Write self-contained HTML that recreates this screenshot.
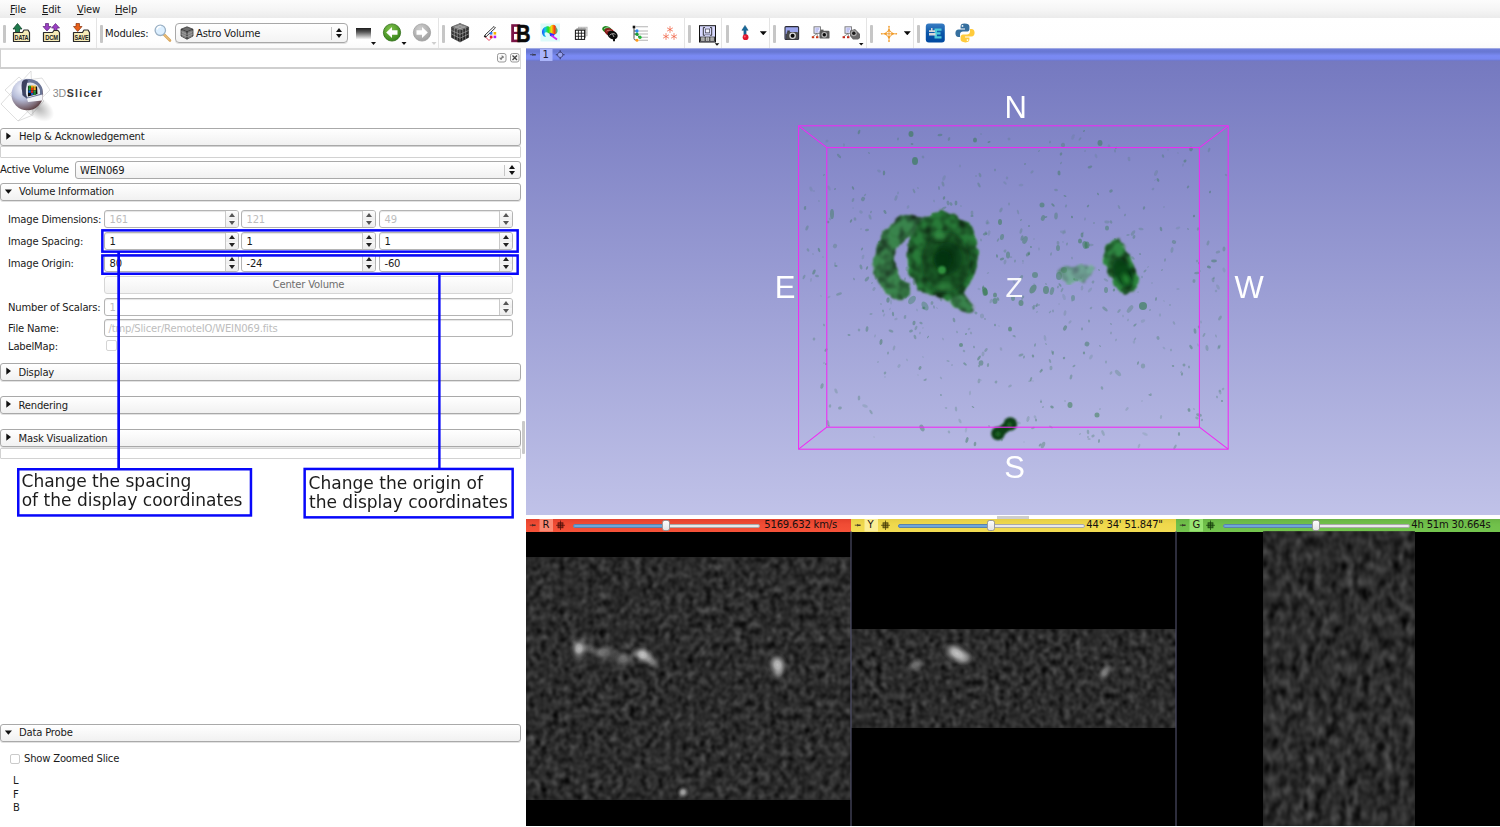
<!DOCTYPE html>
<html lang="en">
<head>
<meta charset="utf-8">
<title>3D Slicer - Astro Volume</title>
<style>
*{box-sizing:border-box;margin:0;padding:0}
html,body{width:1500px;height:827px;overflow:hidden;background:#fff}
body{font-family:"DejaVu Sans","Liberation Sans",sans-serif;font-size:10px;letter-spacing:-0.18px;color:#1a1a1a;position:relative}
.abs{position:absolute}
#menubar{left:0;top:0;width:1500px;height:18px;background:linear-gradient(#fcfcfc,#f5f5f5 55%,#ebebeb)}
#menubar span{position:absolute;top:3px;line-height:14px}
#menubar u{text-decoration:underline}
#toolbar{left:0;top:18px;width:1500px;height:30px;background:linear-gradient(#fff,#fefefe 80%,#fafafa)}
.sep{position:absolute;top:7px;width:3px;height:18px;background:#c6c6c6;border-radius:1px}
.tbdiv{position:absolute;top:0;width:1px;height:30px;background:#e4e4e4}
#left{left:0;top:0;width:526px;height:827px}
.combo{border:1px solid #a9a9a9;border-radius:3px;background:linear-gradient(#fff,#f1f1f1)}
.combo b{position:absolute;right:15px;top:3px;width:1px;height:11px;background:#c6c6c6}
.combo i:before{content:"";position:absolute;right:5px;top:3px;border-bottom:4px solid #111;border-left:3.5px solid transparent;border-right:3.5px solid transparent}
.combo i:after{content:"";position:absolute;right:5px;top:9px;border-top:4px solid #111;border-left:3.5px solid transparent;border-right:3.5px solid transparent}
.collapse{position:absolute;left:0;width:521px;height:18px;border:1px solid #a9a9a9;border-radius:3px;background:linear-gradient(#ffffff,#f1f1f1);box-shadow:0 1px 0 #e2e2e2}
.collapse span{position:absolute;left:18px;top:1px;line-height:14px}
.tri-r{position:absolute;left:5.3px;top:3.4px;width:4.7px;height:7.4px;background:#111;clip-path:polygon(0 0,100% 50%,0 100%)}
.tri-d{position:absolute;left:3.8px;top:5.4px;width:7.2px;height:4.4px;background:#111;clip-path:polygon(0 0,100% 0,50% 100%)}
.frame{position:absolute;left:0;width:521px;height:10px;border:1px solid #d2d2d2;border-radius:1px;background:#fff}
.lbl{position:absolute;line-height:14px;white-space:nowrap}
.spin{position:absolute;height:18px;border:1px solid #b4b4b4;border-radius:3px;background:#fff;box-shadow:inset 0 1px 1px #e4e4e4}
.spin span{position:absolute;left:4.5px;top:2px;line-height:14px}
.spin.dis span{color:#bdbdbd}
.spin i{position:absolute;right:0;top:0;width:13px;height:16px;border-left:1px solid #c9c9c9;background:linear-gradient(#fdfdfd,#efefef 48%,#cfcfcf 50%,#f8f8f8 54%,#ececec);border-radius:0 2px 2px 0}
.spin i:before{content:"";position:absolute;left:3px;top:2px;border-bottom:4px solid #222;border-left:3px solid transparent;border-right:3px solid transparent}
.spin i:after{content:"";position:absolute;left:3px;top:10px;border-top:4px solid #222;border-left:3px solid transparent;border-right:3px solid transparent}
.spin.dis i:before{border-bottom-color:#555}
.spin.dis i:after{border-top-color:#555}
.anno{position:absolute;border:3px solid #0505fc}
.annot{position:absolute;border:3px solid #0505fc;background:#fff;font-size:17.5px;line-height:20px;color:#111;padding:1px 0 0 3px;white-space:nowrap}
.vline{position:absolute;width:3px;background:#0505fc}
#right{left:0;top:0;width:1500px;height:827px}
</style>
</head>
<body>
<div id="menubar" class="abs">
<span style="left:10px"><u>F</u>ile</span><span style="left:42px"><u>E</u>dit</span><span style="left:77px"><u>V</u>iew</span><span style="left:115px"><u>H</u>elp</span>
</div>
<div id="toolbar" class="abs">
<div class="sep" style="left:3px"></div>
<svg class="abs" style="left:12px;top:4px" width="20" height="22" viewBox="0 0 20 22"><path d="M1 7 L5.5 1.5 L10 7 H7.5 V10.5 H3.5 V7 Z" fill="#1f7a4c" stroke="#14482d" stroke-width=".8"/><path d="M1.5 10.5 H10.5 L12 8 H16 L17.5 10.5 V19.5 H1.5 Z" fill="#f6ecb8" stroke="#2b2b2b" stroke-width="1.2" stroke-linejoin="round"/><text x="2.6" y="17.6" font-size="6.6" font-weight="bold" font-family="Liberation Sans,sans-serif" textLength="13.8" lengthAdjust="spacingAndGlyphs" fill="#222">DATA</text></svg>
<svg class="abs" style="left:42px;top:4px" width="20" height="22" viewBox="0 0 20 22"><path d="M1 4.5 H3.5 V1.5 H6.5 V4.5 H9 L5 9 Z" fill="#9b3fc4" stroke="#5a2476" stroke-width=".7"/><path d="M9.5 6 L13.5 1.5 L17.5 6 H15 V9 H12 V6 Z" fill="#9b3fc4" stroke="#5a2476" stroke-width=".7"/><path d="M1.5 10.5 H10.5 L12 8.5 H16 L17.5 10.5 V19.5 H1.5 Z" fill="#f6ecb8" stroke="#2b2b2b" stroke-width="1.2" stroke-linejoin="round"/><text x="3.2" y="17.6" font-size="6.6" font-weight="bold" font-family="Liberation Sans,sans-serif" textLength="12.6" lengthAdjust="spacingAndGlyphs" fill="#222">DCM</text></svg>
<svg class="abs" style="left:72px;top:4px" width="20" height="22" viewBox="0 0 20 22"><path d="M1.5 4.5 H4 V1.5 H7.5 V4.5 H10 L5.7 9.5 Z" fill="#e8601a" stroke="#8a300a" stroke-width=".7"/><path d="M1.5 10.5 H10.5 L12 8 H16 L17.5 10.5 V19.5 H1.5 Z" fill="#f6ecb8" stroke="#2b2b2b" stroke-width="1.2" stroke-linejoin="round"/><text x="2.6" y="17.6" font-size="6.6" font-weight="bold" font-family="Liberation Sans,sans-serif" textLength="13.8" lengthAdjust="spacingAndGlyphs" fill="#222">SAVE</text></svg>
<div class="tbdiv" style="left:96px"></div>
<div class="sep" style="left:100px"></div>
<span class="lbl" style="left:105px;top:9px">Modules:</span>
<svg class="abs" style="left:153px;top:5px" width="20" height="20" viewBox="0 0 20 20"><line x1="10" y1="10.5" x2="17" y2="17.5" stroke="#d9a55a" stroke-width="2.6" stroke-linecap="round"/><line x1="10.5" y1="11" x2="16.5" y2="17" stroke="#f1cf92" stroke-width="1" stroke-linecap="round"/><circle cx="7.3" cy="7.3" r="5.2" fill="#dcefff" stroke="#9ab0c4" stroke-width="1.3"/><path d="M4 6.5 A3.6 3.6 0 0 1 8 3.6" stroke="#fff" stroke-width="1.4" fill="none"/></svg>
<div class="abs" id="modcombo" style="left:175px;top:5px;width:173px;height:20px;border:1px solid #a8a8a8;border-radius:4px;background:linear-gradient(#fff,#f3f3f3);box-shadow:0 1px 0 #e0e0e0">
<svg class="abs" style="left:4px;top:2px" width="14" height="14" viewBox="0 0 14 14"><path d="M7 .8 L13 3.2 V10 L7 13.2 L1 10 V3.2 Z" fill="#6c6c6c" stroke="#3a3a3a" stroke-width=".8"/><path d="M1 3.2 L7 5.8 L13 3.2 M7 5.8 V13.2" stroke="#2e2e2e" stroke-width=".8" fill="none"/><path d="M3 4.4 V11 M5 5.2 V12 M9 5.2 V12 M11 4.4 V11 M1 5.6 L7 8.4 L13 5.6 M1 7.9 L7 10.8 L13 7.9" stroke="#b9b9b9" stroke-width=".5" fill="none"/></svg>
<span class="lbl" style="left:20px;top:3px">Astro Volume</span>
<div class="abs" style="left:155px;top:3px;width:1px;height:13px;background:#c6c6c6"></div>
<div class="abs" style="left:160px;top:4px;border-bottom:4px solid #111;border-left:3.5px solid transparent;border-right:3.5px solid transparent"></div>
<div class="abs" style="left:160px;top:10px;border-top:4px solid #111;border-left:3.5px solid transparent;border-right:3.5px solid transparent"></div>
</div>
<svg class="abs" style="left:354px;top:8px" width="24" height="20" viewBox="0 0 24 20"><defs><linearGradient id="gg1" x1="0" y1="0" x2="0" y2="1"><stop offset="0" stop-color="#1c1c1c"/><stop offset=".35" stop-color="#555"/><stop offset="1" stop-color="#f4f4f4"/></linearGradient></defs><rect x="2" y="2" width="15" height="11" fill="url(#gg1)"/><path d="M17 16 H22 L19.5 19 Z" fill="#111"/></svg>
<svg class="abs" style="left:382px;top:4px" width="28" height="24" viewBox="0 0 28 24"><defs><radialGradient id="gg2" cx=".4" cy=".3" r=".8"><stop offset="0" stop-color="#7fc24a"/><stop offset="1" stop-color="#2f7d14"/></radialGradient></defs><circle cx="10" cy="10.5" r="8.6" fill="url(#gg2)" stroke="#2c6a14" stroke-width=".8"/><path d="M4.2 10.5 L10 5 V8.3 H15.5 V12.7 H10 V16 Z" fill="#fff"/><path d="M19.5 20 H24.5 L22 23 Z" fill="#111"/></svg>
<svg class="abs" style="left:412px;top:4px" width="28" height="24" viewBox="0 0 28 24"><defs><radialGradient id="gg3" cx=".4" cy=".3" r=".8"><stop offset="0" stop-color="#cfcfcf"/><stop offset="1" stop-color="#9a9a9a"/></radialGradient></defs><circle cx="10" cy="10.5" r="8.6" fill="url(#gg3)" stroke="#9d9d9d" stroke-width=".8"/><path d="M15.8 10.5 L10 5 V8.3 H4.5 V12.7 H10 V16 Z" fill="#fff"/><path d="M19.5 20 H24.5 L22 23 Z" fill="#cfcfcf"/></svg>
<div class="tbdiv" style="left:438px"></div>
<div class="sep" style="left:442px"></div>
<svg class="abs" style="left:450px;top:4px" width="20" height="22" viewBox="0 0 20 22"><defs><linearGradient id="cbf" x1="0" y1="0" x2="0" y2="1"><stop offset="0" stop-color="#555"/><stop offset="1" stop-color="#1c1c1c"/></linearGradient></defs><path d="M10 1.600 L18.600 5 V15.400 L10 20 L1.500 15.400 V5 Z" fill="url(#cbf)" stroke="#333" stroke-width=".6"/><path d="M1.500 5 L10 8.600 L18.600 5 L10 1.600 Z" fill="#777"/><path d="M10 8.600 V20 L18.600 15.400 V5 Z" fill="#000" opacity=".25"/><path d="M4.300 6.200 V17 M7.200 7.400 V18.500 M12.800 7.400 V18.500 M15.700 6.200 V17 M1.500 8.500 L10 12.300 L18.600 8.500 M1.500 12 L10 16.200 L18.600 12 M4.300 3.900 L12.800 7.400 M7.200 2.700 L15.700 6.200 M15.700 3.900 L7.200 7.400 M12.800 2.700 L4.300 6.200 M10 8.600 V20" stroke="#cfcfcf" stroke-width=".6" fill="none" opacity=".8"/></svg>
<svg class="abs" style="left:482px;top:6px" width="18" height="18" viewBox="0 0 18 18"><path d="M2.5 12 L7 16.5 L10 13.5" stroke="#e02848" stroke-width=".9" fill="none"/><path d="M2.8 11.2 L12 2.5 L13.4 3.9 L4.2 12.6 Z" fill="#fff" stroke="#222" stroke-width=".9"/><path d="M2.3 11.8 L3.7 13.2" stroke="#111" stroke-width="1.6"/><rect x="7.8" y="8" width="2.6" height="2.6" fill="#2f7bf0"/><rect x="11.6" y="8" width="2.6" height="2.6" fill="#f5b400"/><rect x="7.8" y="11.6" width="2.6" height="2.6" fill="#e62020"/><rect x="11.6" y="11.6" width="2.6" height="2.6" fill="#b41cf0"/></svg>
<svg class="abs" style="left:509px;top:4px" width="24" height="22" viewBox="0 0 24 22"><rect x="2.2" y="2.2" width="9" height="18" fill="#7a1446"/><rect x="5" y="4.8" width="4.2" height="5" fill="#fff"/><rect x="5" y="12" width="4.2" height="5.6" fill="#fff"/><text x="7.2" y="20.2" font-size="24" font-family="Liberation Sans,sans-serif" font-weight="bold" fill="#0a0a0a" stroke="#0a0a0a" stroke-width=".7" textLength="14" lengthAdjust="spacingAndGlyphs">B</text></svg>
<svg class="abs" style="left:540px;top:5px" width="21" height="20" viewBox="0 0 21 20"><defs><linearGradient id="rb" x1="0" y1="0" x2="1" y2="0"><stop offset="0" stop-color="#1848ff"/><stop offset=".2" stop-color="#10c8e8"/><stop offset=".4" stop-color="#20e020"/><stop offset=".6" stop-color="#f0e010"/><stop offset=".8" stop-color="#ff4010"/><stop offset="1" stop-color="#20d0a0"/></linearGradient><filter id="b05"><feGaussianBlur stdDeviation=".5"/></filter></defs><rect x=".5" y=".5" width="19.5" height="18" fill="#dcfafa"/><g filter="url(#b05)"><path d="M2 9 C2 4 8 2 10 4 C11 1 16 1 16.5 5 C19 7 17 12 14 11.5 L11 12 C8 9 5 8 4.5 11 L6 14 L4 13.5 C2.5 12 2 10.5 2 9 Z" fill="url(#rb)"/><path d="M9.5 9.5 L15 11.5 L13 13.5 L10 13 Z" fill="#3030ff"/><path d="M11.5 12.5 L17 16.5" stroke="#d020f0" stroke-width="1.8"/></g></svg>
<svg class="abs" style="left:573px;top:7px" width="16" height="16" viewBox="0 0 16 16"><rect x="5.5" y="2.2" width="8.6" height="8.6" fill="#d8d8d8" stroke="#b4b4b4" stroke-width=".8"/><path d="M8.4 2.2 V10.8 M11.2 2.2 V10.8 M5.5 5 H14 M5.5 7.9 H14" stroke="#b4b4b4" stroke-width=".7"/><rect x="3.8" y="3.8" width="8.6" height="8.6" fill="#bcbcbc" stroke="#8a8a8a" stroke-width=".8"/><rect x="2.4" y="5.2" width="9.2" height="9.2" fill="#fff" stroke="#111" stroke-width="1"/><path d="M5.4 5.2 V14.4 M8.4 5.2 V14.4 M2.4 8.2 H11.6 M2.4 11.3 H11.6" stroke="#111" stroke-width=".85"/></svg>
<svg class="abs" style="left:600px;top:6px" width="20" height="18" viewBox="0 0 20 18"><ellipse cx="7" cy="5.6" rx="5" ry="3.3" fill="#1f8a1f" transform="rotate(20 7 5.6)"/><path d="M4 5 C5.5 3.4 8 3.4 9.5 4.6" stroke="#fff" stroke-width=".6" fill="none"/><ellipse cx="9.5" cy="8" rx="5.3" ry="3.5" fill="#8a1a1a" transform="rotate(25 9.500 8)"/><path d="M6.500 7.200 C8 5.800 10.500 6 12 7.200" stroke="#e8b0b0" stroke-width=".6" fill="none"/><ellipse cx="12.600" cy="11" rx="5.300" ry="4" fill="#0c0c0c" transform="rotate(25 12.600 11)"/><path d="M14 14 V17.200" stroke="#0c0c0c" stroke-width="2"/><path d="M9.500 11.500 C11 9.300 14 9 15.500 10.500 M12.500 10 L14 13" stroke="#fff" stroke-width=".6" fill="none"/></svg>
<svg class="abs" style="left:630px;top:6px" width="20" height="18" viewBox="0 0 20 18"><path d="M4 3 V14.500 Q4 16 5.500 16 H7 M4 7 H6 M4 10 H6 M7 10.500 L9 13" stroke="#555" stroke-width="1" fill="none"/><path d="M6 2.800 H18 M9 7 H18 M9 10 H18 M12 13.200 H18 M9 16.200 H18" stroke="#b4b4b4" stroke-width="1.050"/><rect x="2.700" y="1.700" width="2.600" height="2.600" fill="#111"/><circle cx="7" cy="7" r="1.700" fill="#2f8af0"/><circle cx="7" cy="10.200" r="1.700" fill="#1fa03a"/><circle cx="10" cy="13.300" r="1.700" fill="#22b43c"/><circle cx="7" cy="16.300" r="1.500" fill="#ff9a1a"/></svg>
<svg class="abs" style="left:660px;top:6px" width="20" height="18" viewBox="0 0 20 18"><g stroke="#f0502e" stroke-width=".65" stroke-linecap="round"><path d="M10 2.500 V8.500 M7.400 4 L12.600 7 M12.600 4 L7.400 7"/><path d="M6 9.500 V15.500 M3.400 11 L8.600 14 M8.600 11 L3.400 14"/><path d="M14 9.500 V15.500 M11.400 11 L16.600 14 M16.600 11 L11.400 14"/></g></svg>
<div class="tbdiv" style="left:684px"></div>
<div class="sep" style="left:688px"></div>
<svg class="abs" style="left:698px;top:6px" width="23" height="22" viewBox="0 0 23 22"><rect x="1.500" y="1.700" width="16" height="16.300" fill="#d9daff" stroke="#111" stroke-width="1"/><rect x="2" y="12.600" width="15" height="5" fill="#3c3c3c"/><rect x="3.200" y="13.400" width="3.400" height="3.400" fill="#d4d4d4"/><rect x="7.800" y="13.400" width="3.400" height="3.400" fill="#d4d4d4"/><rect x="12.400" y="13.400" width="3.400" height="3.400" fill="#d4d4d4"/><path d="M3.200 15.100 H16 M4.900 13.400 V16.800 M9.500 13.400 V16.800 M14.100 13.400 V16.800" stroke="#777" stroke-width=".5"/><path d="M7 3.600 H5.300 V11.300 H7 M12 3.600 H13.700 V11.300 H12" fill="none" stroke="#222" stroke-width=".9"/><rect x="7.400" y="5" width="4.200" height="3.800" fill="#f4f4ff" stroke="#556" stroke-width=".8"/><path d="M6 11.300 L7.600 9.600 H11.400 L13 11.300 Z" fill="#9a9cb4"/><path d="M16.800 19.200 H21.300 L19 21.700 Z" fill="#111"/></svg>
<div class="tbdiv" style="left:721px"></div>
<div class="sep" style="left:726px"></div>
<svg class="abs" style="left:738px;top:6px" width="14" height="18" viewBox="0 0 14 18"><path d="M7 1.400 L10.100 6.300 H8.100 V11 H5.900 V6.300 H3.900 Z" fill="#16689a" stroke="#0d4a72" stroke-width=".5"/><circle cx="7.600" cy="13.200" r="2.900" fill="#e0142a"/><circle cx="6.800" cy="12.400" r="1" fill="#f06070"/></svg>
<div class="abs" style="left:759.8px;top:13.200px;width:7px;height:4px;background:#0a0a0a;clip-path:polygon(0 0,100% 0,50% 100%)"></div>
<div class="tbdiv" style="left:769px"></div>
<div class="sep" style="left:773px"></div>
<svg class="abs" style="left:783px;top:7px" width="18" height="16" viewBox="0 0 18 16"><rect x="2" y="1.600" width="13.600" height="12.800" rx="1" fill="#9aa4ee" stroke="#2a2a35" stroke-width="1.100"/><rect x="2.500" y="9" width="12.600" height="5" fill="#3f4150"/><rect x="4.300" y="5.500" width="2.500" height="2.500" fill="#3a3a3a"/><rect x="3.600" y="7" width="11.400" height="7.600" rx="1" fill="#4a4a4a"/><circle cx="9.600" cy="10.800" r="3.300" fill="#d9d9d9"/><circle cx="9.600" cy="10.800" r="2" fill="#0a0a0a"/></svg>
<svg class="abs" style="left:810px;top:7px" width="22" height="16" viewBox="0 0 22 16"><rect x="4" y="1.800" width="6.500" height="6.500" fill="#e4e6ff" stroke="#777" stroke-width=".9"/><path d="M5.500 4 H9 M5.500 6 H8" stroke="#8a90e0" stroke-width=".8"/><path d="M7 8.500 L3 11.500 M7 8.500 L7.500 11.500" stroke="#555" stroke-width=".6"/><rect x="1.800" y="11.200" width="2.400" height="2" fill="#c83a1a"/><rect x="6" y="11.200" width="2.400" height="2" fill="#c83a1a"/><rect x="9.500" y="5.800" width="10" height="7.800" rx="1.200" fill="#5a5a5a"/><rect x="10.500" y="4.600" width="3" height="2" fill="#5a5a5a"/><circle cx="14.300" cy="9.800" r="2.900" fill="#b4b4b4"/><circle cx="14.300" cy="9.800" r="1.700" fill="#0a0a0a"/></svg>
<svg class="abs" style="left:841px;top:7px" width="24" height="22" viewBox="0 0 24 22"><rect x="4" y="1.800" width="6.500" height="6.500" fill="#e4e6ff" stroke="#777" stroke-width=".9"/><path d="M5.500 4 H9 M5.500 6 H8" stroke="#8a90e0" stroke-width=".8"/><path d="M7 8.500 L3 11.500 M7 8.500 L7.500 11.500" stroke="#555" stroke-width=".6"/><rect x="1.600" y="11.200" width="2.400" height="2" fill="#c0281a"/><rect x="6" y="11.200" width="2.400" height="2" fill="#c0281a"/><path d="M9 5.500 L14 4 L19 9 V13 L17 14.500 H12 L9 11 Z" fill="#6a6a6a"/><circle cx="12.800" cy="8.200" r="3" fill="#a8a8a8"/><circle cx="12.800" cy="8.200" r="1.700" fill="#1a1a1a"/><path d="M18 18 H22.500 L20.200 20.500 Z" fill="#111"/></svg>
<div class="tbdiv" style="left:866px"></div>
<div class="sep" style="left:870px"></div>
<svg class="abs" style="left:880px;top:7px" width="18" height="18" viewBox="0 0 18 18"><g stroke="#f0961e" fill="none"><path d="M9 1 V17 M1 8.800 H17" stroke-width=".8"/><circle cx="9" cy="8.800" r="2.800" stroke-width=".8"/></g><g fill="#f0961e"><path d="M9 3.500 L10.500 5.800 H7.500 Z M9 14 L10.500 11.800 H7.500 Z M3.600 8.800 L5.900 7.300 V10.300 Z M14.400 8.800 L12.100 7.300 V10.300 Z"/><path d="M9 .6 L9.900 2.200 H8.100 Z M9 17.200 L9.900 15.600 H8.100 Z M.6 8.800 L2.200 7.900 V9.700 Z M17.400 8.800 L15.800 7.900 V9.700 Z"/></g></svg>
<div class="abs" style="left:903.8px;top:13.200px;width:7px;height:4px;background:#0a0a0a;clip-path:polygon(0 0,100% 0,50% 100%)"></div>
<div class="tbdiv" style="left:913px"></div>
<div class="sep" style="left:917px"></div>
<svg class="abs" style="left:925px;top:5px" width="21" height="20" viewBox="0 0 21 20"><defs><linearGradient id="be" x1="0" y1="0" x2="0" y2="1"><stop offset="0" stop-color="#3a7ec4"/><stop offset=".5" stop-color="#0a56a8"/><stop offset="1" stop-color="#0048a0"/></linearGradient></defs><rect x=".8" y=".4" width="19" height="19.200" rx="3" fill="url(#be)"/><path d="M9.500 5.500 H16.500 V7.800 H12 V9.300 H15.500 V11.500 H12 V13.200 H16.500 V15.600 H9.500 Z" fill="#4ecad8"/><path d="M4 7.300 H6 V5 H7.500 V7.300 H10 V9 H4 Z M4 10 H10.500 V12.600 H4 Z" fill="#d8d8d8"/></svg>
<svg class="abs" style="left:954px;top:5px" width="22" height="20" viewBox="0 0 22 20"><path d="M10.500 .6 C7.500 .6 6.600 1.800 6.600 3.400 V5.600 H11 V6.400 H4.600 C2.600 6.400 1.400 7.800 1.400 10.200 C1.400 12.600 2.600 14 4.400 14 H6 V11.600 C6 9.800 7.400 8.600 9 8.600 H13 C14.400 8.600 15.400 7.600 15.400 6.200 V3.400 C15.400 1.800 13.800 .6 10.500 .6 Z" fill="#366f9e"/><circle cx="8.500" cy="2.900" r=".9" fill="#fff"/><path d="M11.500 19.400 C14.500 19.400 15.400 18.200 15.400 16.600 V14.400 H11 V13.600 H17.400 C19.400 13.600 20.600 12.200 20.600 9.800 C20.600 7.400 19.400 6 17.600 6 H16 V8.400 C16 10.200 14.600 11.400 13 11.400 H9 C7.600 11.400 6.600 12.400 6.600 13.800 V16.600 C6.600 18.200 8.200 19.400 11.500 19.400 Z" fill="#ffcb3c"/><circle cx="13.500" cy="17.100" r=".9" fill="#fff"/></svg>


</div>
<div id="left" class="abs">
<!--LEFT-START-->
<div class="abs" style="left:0;top:48px;width:521px;height:21px;border:2px solid #cfcfcf;border-left-width:1px;border-right:1px solid #d9d9d9;border-top-color:#dcdcdc;background:#fff"></div>
<svg class="abs" style="left:497px;top:53px" width="24" height="10" viewBox="0 0 24 10"><rect x=".5" y=".5" width="8.500" height="8.500" rx="2" fill="#fafafa" stroke="#8e8e8e" stroke-width=".9"/><path d="M2.500 5 A1.800 1.800 0 1 0 5 2.500 M4.500 7 A1.800 1.800 0 1 1 7 4.500" stroke="#666" stroke-width=".9" fill="none"/><rect x="13.500" y=".5" width="8.500" height="8.500" rx="2" fill="#fafafa" stroke="#8e8e8e" stroke-width=".9"/><path d="M15.500 2.500 L20 7 M20 2.500 L15.500 7" stroke="#444" stroke-width="1.300"/></svg>
<svg class="abs" style="left:0;top:68px" width="110" height="58" viewBox="0 0 110 58">
<defs><radialGradient id="sph" cx=".35" cy=".3" r=".8"><stop offset="0" stop-color="#f4f6ff"/><stop offset=".45" stop-color="#b6bcd8"/><stop offset=".8" stop-color="#7a6670"/><stop offset="1" stop-color="#4a2a2a"/></radialGradient>
<radialGradient id="shd" cx=".5" cy=".5" r=".5"><stop offset="0" stop-color="#000" stop-opacity=".3"/><stop offset="1" stop-color="#000" stop-opacity="0"/></radialGradient>
<filter id="lb"><feGaussianBlur stdDeviation=".4"/></filter></defs>
<g stroke="#c9c9c9" stroke-width=".6" fill="none"><path d="M1 36 L31 3 L33 47 L18 53 Z"/><path d="M5 22 L19 9 L44 33 L31 47 Z"/><path d="M18 53 L50 22 L42 10 L27 12"/></g>
<ellipse cx="38" cy="40" rx="18" ry="11" fill="url(#shd)" transform="rotate(35 38 40)"/>
<g filter="url(#lb)"><circle cx="27.300" cy="26.500" r="15.800" fill="url(#sph)"/>
<path d="M24 12 C30 9 40 12 42.500 21 L42.500 27 L27 31 L22 27 Z" fill="#6a7496"/>
<path d="M27 15 C32 13 38 16 40 22 L40 26 L28 29.500 L25 27 Z" fill="#dfe2ea"/>
<path d="M22 14 C24 11 27 11 28 12.500 C25.500 18 25 24 27 30 L23.500 28 C21.500 23 21 18 22 14 Z" fill="#3c4260"/>
<path d="M28 18 L37 18.500 L37.500 26 L28 28.500 Z" fill="#111"/>
<g><rect x="28.500" y="17.500" width="2.300" height="2.300" fill="#2aa02a"/><rect x="31" y="17.500" width="2.300" height="2.300" fill="#f0a010"/><rect x="33.500" y="17.500" width="2.300" height="2.300" fill="#f0c030"/>
<rect x="28.500" y="20" width="2.300" height="2.300" fill="#20a040"/><rect x="31" y="20" width="2.300" height="2.300" fill="#f03010"/><rect x="33.500" y="20" width="2.300" height="2.300" fill="#f0a020"/>
<rect x="28.500" y="22.500" width="2.300" height="2.300" fill="#1060d0"/><rect x="31" y="22.500" width="2.300" height="2.300" fill="#e02020"/><rect x="33.500" y="22.500" width="2.300" height="2.300" fill="#20a040"/>
<rect x="31" y="25" width="2.300" height="2" fill="#1a50c0"/><rect x="33.500" y="25" width="2.300" height="2" fill="#208a30"/></g>
<path d="M27 30.500 L42.500 26.500 C43 29 42.500 31 42 32.500 L28 34 Z" fill="#f2f3f8"/></g>
<text x="52.800" y="29" font-family="Liberation Sans,sans-serif" font-size="10.600" fill="#8a8a8a">3D</text>
<text x="66.800" y="29" font-family="Liberation Sans,sans-serif" font-size="10.600" font-weight="bold" fill="#3a3a3a" letter-spacing="1.250">Slicer</text>
</svg>
<div class="collapse" style="top:128px"><div class="tri-r"></div><span>Help &amp; Acknowledgement</span></div>
<div class="frame" style="top:146px;height:12px"></div>
<span class="lbl" style="left:0;top:163px">Active Volume</span>
<div class="abs combo" style="left:75px;top:161px;width:446px;height:18px"><span class="lbl" style="left:4px;top:2px">WEIN069</span><b></b><i></i></div>
<div class="collapse" style="top:183px"><div class="tri-d"></div><span>Volume Information</span></div>
<span class="lbl" style="left:8px;top:213px">Image Dimensions:</span>
<div class="spin dis" style="left:104px;top:210px;width:135px"><span>161</span><i></i></div>
<div class="spin dis" style="left:241px;top:210px;width:135px"><span>121</span><i></i></div>
<div class="spin dis" style="left:379px;top:210px;width:134px"><span>49</span><i></i></div>
<span class="lbl" style="left:8px;top:235px">Image Spacing:</span>
<div class="spin" style="left:104px;top:232px;width:135px"><span>1</span><i></i></div>
<div class="spin" style="left:241px;top:232px;width:135px"><span>1</span><i></i></div>
<div class="spin" style="left:379px;top:232px;width:134px"><span>1</span><i></i></div>
<span class="lbl" style="left:8px;top:257px">Image Origin:</span>
<div class="spin" style="left:104px;top:254px;width:135px"><span>80</span><i></i></div>
<div class="spin" style="left:241px;top:254px;width:135px"><span>-24</span><i></i></div>
<div class="spin" style="left:379px;top:254px;width:134px"><span>-60</span><i></i></div>
<div class="abs" style="left:104px;top:276px;width:409px;height:18px;border:1px solid #d6d6d6;border-radius:3px;background:linear-gradient(#fefefe,#f2f2f2);color:#6e6e6e;text-align:center;line-height:15px">Center Volume</div>
<span class="lbl" style="left:8px;top:301px">Number of Scalars:</span>
<div class="spin dis" style="left:104px;top:298px;width:409px"><span>1</span><i></i></div>
<span class="lbl" style="left:8px;top:322px">File Name:</span>
<div class="spin dis" style="left:104px;top:319px;width:409px"><span style="left:3.500px">/tmp/Slicer/RemoteIO/WEIN069.fits</span></div>
<span class="lbl" style="left:8px;top:340px">LabelMap:</span>
<div class="abs" style="left:106px;top:340px;width:11px;height:11px;border:1px solid #d4d4d4;border-radius:2px;background:#fff"></div>
<div class="collapse" style="top:363px"><div class="tri-r"></div><span style="top:2px;left:17.500px">Display</span></div>
<div class="collapse" style="top:396px"><div class="tri-r"></div><span style="top:2px;left:17.500px">Rendering</span></div>
<div class="collapse" style="top:429px"><div class="tri-r"></div><span style="top:2px;left:17.500px">Mask Visualization</span></div>
<div class="frame" style="top:448px;height:11px"></div>
<svg class="abs" style="left:0;top:220px" width="526" height="310" viewBox="0 220 526 310">
<g fill="none" stroke="#0808fa" stroke-width="2.500"><rect x="102.350" y="230.350" width="415.300" height="21.300"/><rect x="102.350" y="255.450" width="415.300" height="18.300"/>
<path d="M118.650 252 V469" stroke-width="2.700"/><path d="M439.400 274 V469" stroke-width="2.400"/>
<rect x="18.250" y="469.250" width="232.700" height="46.200" fill="#fff"/><rect x="304.650" y="468.950" width="208" height="48.400" fill="#fff"/></g>
<g font-family="DejaVu Sans,Liberation Sans,sans-serif" font-size="17.050" fill="#1c1c1c" letter-spacing="0" style="filter:grayscale(1)"><text x="21.500" y="486.700">Change the spacing</text><text x="21.700" y="505.800">of the display coordinates</text><text x="308.600" y="489.100">Change the origin of</text><text x="309" y="508.300">the display coordinates</text></g>
</svg>
<div class="collapse" style="top:724px"><div class="tri-d"></div><span>Data Probe</span></div>
<div class="abs" style="left:10px;top:754px;width:10px;height:10px;border:1px solid #cacaca;border-radius:2px;background:#fff"></div>
<span class="lbl" style="left:24px;top:752px">Show Zoomed Slice</span>
<span class="lbl" style="left:13px;top:774px">L</span><span class="lbl" style="left:13px;top:788px">F</span><span class="lbl" style="left:13px;top:801px">B</span>
<div class="abs" style="left:522px;top:421px;width:3px;height:33px;background:#c9c9c9;border-radius:1px"></div>
<!--LEFT-END-->
</div>
<div id="right" class="abs">
<!--RIGHT-START-->
<div class="abs" style="left:526px;top:48px;width:974px;height:466.500px;background:linear-gradient(#7579c0 0,#7579c0 13px,#c0c2e8 100%)"></div>
<div class="abs" style="left:526px;top:48px;width:974px;height:13px;background:linear-gradient(#b8bfe8 0,#6a79d8 12%,#6878d2 30%,#7a8af4 60%,#7888f0 85%,#6c74c4 100%)"></div>
<svg class="abs" style="left:528px;top:49px" width="40" height="12" viewBox="0 0 40 12"><path d="M2 5.700 H4.500" stroke="#3a3f60" stroke-width=".9"/><path d="M4.300 4.300 L5.400 4.900 H7.800 V6.500 H5.400 L4.300 7.100 Z" fill="#3a3d55"/><rect x="12" y="0" width="12.500" height="12" fill="#aab4fa"/><rect x="29.600" y="3.200" width="5.200" height="5.200" fill="#98a2ee"/><g stroke="#34386e" stroke-width=".8" fill="none"><circle cx="32.200" cy="5.800" r="2.700"/><path d="M32.200 1.300 V3.200 M32.200 8.400 V10.300 M27.800 5.800 H29.600 M34.800 5.800 H36.600" stroke-width="1.100"/></g></svg>
<span class="lbl" style="left:542.500px;top:48px;color:#201a30;letter-spacing:0">1</span>
<svg class="abs" style="left:526px;top:61px" width="974" height="454" viewBox="526 61 974 454"><defs><filter id="bl1" x="-20%" y="-20%" width="140%" height="140%"><feGaussianBlur stdDeviation="1.300"/></filter><filter id="bl2" x="-20%" y="-20%" width="140%" height="140%"><feGaussianBlur stdDeviation="2.200"/></filter><filter id="bl05"><feGaussianBlur stdDeviation=".6"/></filter><filter id="rough" x="-15%" y="-15%" width="130%" height="130%" color-interpolation-filters="sRGB"><feTurbulence type="fractalNoise" baseFrequency=".09" numOctaves="2" seed="3" result="n"/><feDisplacementMap in="SourceGraphic" in2="n" scale="9" xChannelSelector="R" yChannelSelector="G" result="d"/><feColorMatrix in="n" type="matrix" values="0 0 1.500 0 .05  0 0 1.500 0 .05  0 0 1.500 0 .05  0 0 0 0 1" result="g"/><feBlend in="d" in2="g" mode="multiply" result="m"/><feComposite in="m" in2="d" operator="in" result="c"/><feGaussianBlur stdDeviation=".9"/></filter><radialGradient id="core" cx=".5" cy=".55" r=".55"><stop offset="0" stop-color="#2f9a3c"/><stop offset=".18" stop-color="#0c4a16"/><stop offset=".45" stop-color="#1f6a2c"/><stop offset=".8" stop-color="#2f7e3e"/><stop offset="1" stop-color="#3c8a4c" stop-opacity=".75"/></radialGradient></defs><g fill="#3f7a5e" filter="url(#bl05)"><ellipse cx="854" cy="279" rx="0.7" ry="1.2" opacity="0.43" transform="rotate(-23 854 279)"/><ellipse cx="1144" cy="208" rx="1.1" ry="1.7" opacity="0.41" transform="rotate(16 1144 208)"/><ellipse cx="1046" cy="344" rx="0.5" ry="0.9" opacity="0.44" transform="rotate(115 1046 344)"/><ellipse cx="1164" cy="348" rx="0.9" ry="1.6" opacity="0.18" transform="rotate(136 1164 348)"/><ellipse cx="960" cy="269" rx="1.0" ry="1.3" opacity="0.16" transform="rotate(18 960 269)"/><ellipse cx="1133" cy="274" rx="0.6" ry="1.1" opacity="0.24" transform="rotate(60 1133 274)"/><ellipse cx="853" cy="208" rx="0.6" ry="0.7" opacity="0.21" transform="rotate(9 853 208)"/><ellipse cx="1129" cy="263" rx="0.9" ry="1.4" opacity="0.15" transform="rotate(175 1129 263)"/><ellipse cx="811" cy="189" rx="1.5" ry="2.7" opacity="0.16" transform="rotate(-20 811 189)"/><ellipse cx="942" cy="224" rx="0.6" ry="0.7" opacity="0.24" transform="rotate(67 942 224)"/><ellipse cx="819" cy="201" rx="0.6" ry="1.0" opacity="0.26" transform="rotate(-14 819 201)"/><ellipse cx="908" cy="207" rx="1.2" ry="1.9" opacity="0.18" transform="rotate(20 908 207)"/><ellipse cx="987" cy="222" rx="1.3" ry="2.4" opacity="0.21" transform="rotate(20 987 222)"/><ellipse cx="918" cy="188" rx="0.6" ry="0.8" opacity="0.41" transform="rotate(-25 918 188)"/><ellipse cx="1064" cy="358" rx="1.1" ry="1.3" opacity="0.46" transform="rotate(39 1064 358)"/><ellipse cx="1194" cy="281" rx="1.5" ry="1.9" opacity="0.36" transform="rotate(12 1194 281)"/><ellipse cx="1060" cy="285" rx="1.0" ry="2.1" opacity="0.41" transform="rotate(143 1060 285)"/><ellipse cx="979" cy="381" rx="1.4" ry="2.4" opacity="0.28" transform="rotate(11 979 381)"/><ellipse cx="1082" cy="329" rx="0.9" ry="1.4" opacity="0.39" transform="rotate(2 1082 329)"/><ellipse cx="910" cy="278" rx="0.6" ry="0.7" opacity="0.19" transform="rotate(119 910 278)"/><ellipse cx="1114" cy="290" rx="1.2" ry="1.6" opacity="0.47" transform="rotate(16 1114 290)"/><ellipse cx="973" cy="236" rx="0.9" ry="1.9" opacity="0.46" transform="rotate(105 973 236)"/><ellipse cx="1087" cy="344" rx="2.4" ry="2.4" opacity="0.49" transform="rotate(20 1087 344)"/><ellipse cx="1041" cy="371" rx="1.1" ry="1.9" opacity="0.44" transform="rotate(39 1041 371)"/><ellipse cx="921" cy="323" rx="1.2" ry="1.7" opacity="0.38" transform="rotate(115 921 323)"/><ellipse cx="1037" cy="305" rx="1.1" ry="1.8" opacity="0.38" transform="rotate(27 1037 305)"/><ellipse cx="939" cy="293" rx="0.5" ry="0.9" opacity="0.21" transform="rotate(-11 939 293)"/><ellipse cx="1188" cy="229" rx="0.6" ry="1.0" opacity="0.47" transform="rotate(102 1188 229)"/><ellipse cx="966" cy="238" rx="1.2" ry="2.5" opacity="0.40" transform="rotate(-15 966 238)"/><ellipse cx="1030" cy="381" rx="0.8" ry="1.8" opacity="0.27" transform="rotate(79 1030 381)"/><ellipse cx="1009" cy="139" rx="1.3" ry="1.5" opacity="0.21" transform="rotate(-7 1009 139)"/><ellipse cx="956" cy="203" rx="1.4" ry="2.5" opacity="0.42" transform="rotate(1 956 203)"/><ellipse cx="1098" cy="194" rx="0.8" ry="1.3" opacity="0.47" transform="rotate(153 1098 194)"/><ellipse cx="888" cy="300" rx="1.7" ry="2.7" opacity="0.49" transform="rotate(6 888 300)"/><ellipse cx="997" cy="256" rx="1.0" ry="1.7" opacity="0.47" transform="rotate(-11 997 256)"/><ellipse cx="1025" cy="164" rx="0.9" ry="1.0" opacity="0.40" transform="rotate(38 1025 164)"/><ellipse cx="972" cy="216" rx="0.9" ry="1.6" opacity="0.41" transform="rotate(92 972 216)"/><ellipse cx="1100" cy="409" rx="0.5" ry="1.0" opacity="0.37" transform="rotate(8 1100 409)"/><ellipse cx="1111" cy="191" rx="1.4" ry="1.9" opacity="0.43" transform="rotate(57 1111 191)"/><ellipse cx="885" cy="377" rx="0.7" ry="0.8" opacity="0.20" transform="rotate(70 885 377)"/><ellipse cx="981" cy="380" rx="0.6" ry="1.0" opacity="0.16" transform="rotate(123 981 380)"/><ellipse cx="811" cy="280" rx="1.0" ry="1.9" opacity="0.17" transform="rotate(7 811 280)"/><ellipse cx="1045" cy="338" rx="1.3" ry="3.1" opacity="0.18" transform="rotate(171 1045 338)"/><ellipse cx="1111" cy="333" rx="0.9" ry="1.4" opacity="0.28" transform="rotate(14 1111 333)"/><ellipse cx="824" cy="325" rx="0.9" ry="1.2" opacity="0.33" transform="rotate(161 824 325)"/><ellipse cx="884" cy="315" rx="0.8" ry="1.7" opacity="0.19" transform="rotate(29 884 315)"/><ellipse cx="941" cy="378" rx="0.9" ry="1.4" opacity="0.22" transform="rotate(144 941 378)"/><ellipse cx="1125" cy="290" rx="1.1" ry="2.1" opacity="0.48" transform="rotate(61 1125 290)"/><ellipse cx="1028" cy="254" rx="1.5" ry="2.8" opacity="0.42" transform="rotate(39 1028 254)"/><ellipse cx="912" cy="257" rx="0.6" ry="0.7" opacity="0.18" transform="rotate(163 912 257)"/><ellipse cx="1043" cy="445" rx="1.9" ry="3.5" opacity="0.36" transform="rotate(23 1043 445)"/><ellipse cx="909" cy="234" rx="1.0" ry="1.4" opacity="0.26" transform="rotate(87 909 234)"/><ellipse cx="923" cy="357" rx="0.8" ry="0.9" opacity="0.16" transform="rotate(136 923 357)"/><ellipse cx="965" cy="364" rx="1.1" ry="2.1" opacity="0.43" transform="rotate(129 965 364)"/><ellipse cx="906" cy="296" rx="1.4" ry="2.8" opacity="0.49" transform="rotate(27 906 296)"/><ellipse cx="961" cy="306" rx="1.4" ry="2.1" opacity="0.28" transform="rotate(75 961 306)"/><ellipse cx="1091" cy="245" rx="1.2" ry="2.6" opacity="0.25" transform="rotate(87 1091 245)"/><ellipse cx="1067" cy="244" rx="0.8" ry="1.5" opacity="0.36" transform="rotate(14 1067 244)"/><ellipse cx="1015" cy="337" rx="0.7" ry="1.3" opacity="0.15" transform="rotate(-12 1015 337)"/><ellipse cx="968" cy="276" rx="0.6" ry="1.1" opacity="0.37" transform="rotate(-4 968 276)"/><ellipse cx="949" cy="287" rx="1.4" ry="2.8" opacity="0.44" transform="rotate(138 949 287)"/><ellipse cx="1002" cy="440" rx="0.9" ry="1.6" opacity="0.26" transform="rotate(8 1002 440)"/><ellipse cx="976" cy="313" rx="1.4" ry="1.6" opacity="0.35" transform="rotate(123 976 313)"/><ellipse cx="807" cy="228" rx="1.4" ry="2.6" opacity="0.32" transform="rotate(23 807 228)"/><ellipse cx="954" cy="222" rx="1.4" ry="2.1" opacity="0.36" transform="rotate(124 954 222)"/><ellipse cx="1046" cy="217" rx="0.8" ry="1.3" opacity="0.46" transform="rotate(65 1046 217)"/><ellipse cx="943" cy="184" rx="1.3" ry="2.6" opacity="0.29" transform="rotate(-19 943 184)"/><ellipse cx="1156" cy="299" rx="1.0" ry="1.9" opacity="0.38" transform="rotate(12 1156 299)"/><ellipse cx="839" cy="156" rx="1.2" ry="2.7" opacity="0.37" transform="rotate(134 839 156)"/><ellipse cx="1051" cy="427" rx="1.0" ry="2.1" opacity="0.27" transform="rotate(121 1051 427)"/><ellipse cx="1029" cy="254" rx="1.1" ry="1.3" opacity="0.49" transform="rotate(1 1029 254)"/><ellipse cx="1179" cy="434" rx="1.1" ry="2.0" opacity="0.43" transform="rotate(-0 1179 434)"/><ellipse cx="1102" cy="388" rx="1.2" ry="1.8" opacity="0.34" transform="rotate(159 1102 388)"/><ellipse cx="1143" cy="366" rx="2.2" ry="2.5" opacity="0.31" transform="rotate(11 1143 366)"/><ellipse cx="1050" cy="361" rx="1.1" ry="2.0" opacity="0.33" transform="rotate(161 1050 361)"/><ellipse cx="1018" cy="212" rx="1.0" ry="2.2" opacity="0.24" transform="rotate(165 1018 212)"/><ellipse cx="1129" cy="159" rx="1.4" ry="2.2" opacity="0.20" transform="rotate(176 1129 159)"/><ellipse cx="828" cy="423" rx="1.4" ry="3.0" opacity="0.31" transform="rotate(-13 828 423)"/><ellipse cx="1022" cy="238" rx="1.4" ry="2.9" opacity="0.41" transform="rotate(13 1022 238)"/><ellipse cx="1014" cy="281" rx="1.3" ry="2.8" opacity="0.18" transform="rotate(-11 1014 281)"/><ellipse cx="1096" cy="156" rx="1.2" ry="2.2" opacity="0.16" transform="rotate(-17 1096 156)"/><ellipse cx="989" cy="142" rx="0.9" ry="1.5" opacity="0.49" transform="rotate(73 989 142)"/><ellipse cx="1085" cy="151" rx="0.6" ry="0.7" opacity="0.39" transform="rotate(22 1085 151)"/><ellipse cx="808" cy="250" rx="1.2" ry="1.7" opacity="0.31" transform="rotate(-29 808 250)"/><ellipse cx="867" cy="329" rx="1.4" ry="2.9" opacity="0.41" transform="rotate(9 867 329)"/><ellipse cx="1001" cy="210" rx="1.4" ry="2.6" opacity="0.27" transform="rotate(28 1001 210)"/><ellipse cx="859" cy="330" rx="1.2" ry="1.4" opacity="0.31" transform="rotate(19 859 330)"/><ellipse cx="1100" cy="346" rx="0.6" ry="1.3" opacity="0.33" transform="rotate(138 1100 346)"/><ellipse cx="1161" cy="229" rx="1.2" ry="2.3" opacity="0.43" transform="rotate(-13 1161 229)"/><ellipse cx="1052" cy="352" rx="0.9" ry="1.7" opacity="0.27" transform="rotate(-9 1052 352)"/><ellipse cx="915" cy="268" rx="0.7" ry="1.3" opacity="0.35" transform="rotate(-16 915 268)"/><ellipse cx="814" cy="339" rx="1.3" ry="1.6" opacity="0.30" transform="rotate(17 814 339)"/><ellipse cx="1111" cy="222" rx="1.2" ry="1.7" opacity="0.34" transform="rotate(-26 1111 222)"/><ellipse cx="1223" cy="389" rx="1.1" ry="1.4" opacity="0.25" transform="rotate(43 1223 389)"/><ellipse cx="881" cy="304" rx="0.6" ry="0.7" opacity="0.50" transform="rotate(119 881 304)"/><ellipse cx="1161" cy="417" rx="1.1" ry="2.1" opacity="0.21" transform="rotate(6 1161 417)"/><ellipse cx="923" cy="328" rx="0.6" ry="0.9" opacity="0.17" transform="rotate(25 923 328)"/><ellipse cx="957" cy="286" rx="0.8" ry="1.8" opacity="0.35" transform="rotate(51 957 286)"/><ellipse cx="1165" cy="260" rx="0.9" ry="1.7" opacity="0.33" transform="rotate(7 1165 260)"/><ellipse cx="1195" cy="331" rx="1.4" ry="2.8" opacity="0.41" transform="rotate(-9 1195 331)"/><ellipse cx="1063" cy="232" rx="1.4" ry="3.1" opacity="0.19" transform="rotate(98 1063 232)"/><ellipse cx="1175" cy="447" rx="1.2" ry="2.6" opacity="0.34" transform="rotate(30 1175 447)"/><ellipse cx="1185" cy="161" rx="1.3" ry="1.6" opacity="0.48" transform="rotate(44 1185 161)"/><ellipse cx="1074" cy="366" rx="1.0" ry="1.6" opacity="0.39" transform="rotate(55 1074 366)"/><ellipse cx="933" cy="288" rx="1.4" ry="3.3" opacity="0.22" transform="rotate(-9 933 288)"/><ellipse cx="1072" cy="217" rx="1.0" ry="1.3" opacity="0.50" transform="rotate(-16 1072 217)"/><ellipse cx="1216" cy="336" rx="0.8" ry="1.7" opacity="0.25" transform="rotate(158 1216 336)"/><ellipse cx="1200" cy="271" rx="0.6" ry="0.8" opacity="0.40" transform="rotate(-16 1200 271)"/><ellipse cx="986" cy="350" rx="1.3" ry="2.3" opacity="0.33" transform="rotate(38 986 350)"/><ellipse cx="920" cy="333" rx="0.6" ry="1.3" opacity="0.33" transform="rotate(8 920 333)"/><ellipse cx="875" cy="336" rx="0.7" ry="1.5" opacity="0.21" transform="rotate(21 875 336)"/><ellipse cx="817" cy="276" rx="1.3" ry="2.0" opacity="0.32" transform="rotate(100 817 276)"/><ellipse cx="983" cy="287" rx="0.8" ry="1.7" opacity="0.49" transform="rotate(22 983 287)"/><ellipse cx="849" cy="335" rx="1.0" ry="1.5" opacity="0.40" transform="rotate(98 849 335)"/><ellipse cx="885" cy="212" rx="1.3" ry="2.2" opacity="0.45" transform="rotate(-28 885 212)"/><ellipse cx="1033" cy="381" rx="0.7" ry="0.9" opacity="0.16" transform="rotate(112 1033 381)"/><ellipse cx="1014" cy="336" rx="1.0" ry="1.6" opacity="0.32" transform="rotate(107 1014 336)"/><ellipse cx="916" cy="328" rx="1.2" ry="2.4" opacity="0.32" transform="rotate(23 916 328)"/><ellipse cx="1024" cy="442" rx="0.5" ry="0.8" opacity="0.18" transform="rotate(9 1024 442)"/><ellipse cx="1091" cy="357" rx="1.5" ry="2.7" opacity="0.19" transform="rotate(30 1091 357)"/><ellipse cx="957" cy="237" rx="2.5" ry="4.1" opacity="0.29" transform="rotate(11 957 237)"/><ellipse cx="1189" cy="410" rx="1.4" ry="1.9" opacity="0.48" transform="rotate(-15 1189 410)"/><ellipse cx="969" cy="329" rx="1.0" ry="1.4" opacity="0.23" transform="rotate(56 969 329)"/><ellipse cx="960" cy="247" rx="1.0" ry="1.7" opacity="0.17" transform="rotate(-11 960 247)"/><ellipse cx="1005" cy="183" rx="1.1" ry="2.0" opacity="0.19" transform="rotate(131 1005 183)"/><ellipse cx="1085" cy="219" rx="0.8" ry="1.6" opacity="0.26" transform="rotate(13 1085 219)"/><ellipse cx="988" cy="273" rx="0.8" ry="1.3" opacity="0.20" transform="rotate(47 988 273)"/><ellipse cx="865" cy="195" rx="0.8" ry="1.5" opacity="0.29" transform="rotate(41 865 195)"/><ellipse cx="963" cy="255" rx="1.3" ry="2.7" opacity="0.15" transform="rotate(23 963 255)"/><ellipse cx="894" cy="348" rx="1.2" ry="2.6" opacity="0.23" transform="rotate(16 894 348)"/><ellipse cx="874" cy="289" rx="1.4" ry="2.1" opacity="0.23" transform="rotate(35 874 289)"/><ellipse cx="979" cy="185" rx="1.2" ry="2.7" opacity="0.32" transform="rotate(154 979 185)"/><ellipse cx="813" cy="254" rx="0.9" ry="1.0" opacity="0.17" transform="rotate(105 813 254)"/><ellipse cx="1178" cy="153" rx="0.5" ry="0.8" opacity="0.25" transform="rotate(160 1178 153)"/><ellipse cx="874" cy="437" rx="0.5" ry="1.0" opacity="0.18" transform="rotate(98 874 437)"/><ellipse cx="1135" cy="325" rx="0.9" ry="2.1" opacity="0.43" transform="rotate(49 1135 325)"/><ellipse cx="1081" cy="278" rx="0.7" ry="1.0" opacity="0.23" transform="rotate(98 1081 278)"/><ellipse cx="836" cy="391" rx="1.4" ry="2.7" opacity="0.24" transform="rotate(-23 836 391)"/><ellipse cx="1093" cy="436" rx="1.3" ry="1.7" opacity="0.32" transform="rotate(67 1093 436)"/><ellipse cx="944" cy="198" rx="1.1" ry="1.8" opacity="0.47" transform="rotate(22 944 198)"/><ellipse cx="1178" cy="228" rx="1.3" ry="2.3" opacity="0.16" transform="rotate(74 1178 228)"/><ellipse cx="1010" cy="386" rx="1.3" ry="2.0" opacity="0.24" transform="rotate(59 1010 386)"/><ellipse cx="890" cy="309" rx="0.6" ry="1.4" opacity="0.19" transform="rotate(22 890 309)"/><ellipse cx="885" cy="373" rx="1.2" ry="1.4" opacity="0.35" transform="rotate(36 885 373)"/><ellipse cx="1001" cy="349" rx="1.2" ry="1.8" opacity="0.20" transform="rotate(-19 1001 349)"/><ellipse cx="920" cy="368" rx="1.3" ry="2.1" opacity="0.44" transform="rotate(30 920 368)"/><ellipse cx="1084" cy="131" rx="0.8" ry="1.2" opacity="0.42" transform="rotate(39 1084 131)"/><ellipse cx="1034" cy="239" rx="0.7" ry="0.8" opacity="0.24" transform="rotate(22 1034 239)"/><ellipse cx="917" cy="310" rx="0.8" ry="1.2" opacity="0.18" transform="rotate(-16 917 310)"/><ellipse cx="1216" cy="291" rx="1.2" ry="1.3" opacity="0.20" transform="rotate(178 1216 291)"/><ellipse cx="826" cy="364" rx="0.9" ry="1.0" opacity="0.38" transform="rotate(50 826 364)"/><ellipse cx="1224" cy="270" rx="1.3" ry="2.6" opacity="0.16" transform="rotate(-18 1224 270)"/><ellipse cx="1164" cy="301" rx="0.6" ry="0.9" opacity="0.17" transform="rotate(138 1164 301)"/><ellipse cx="1138" cy="363" rx="0.9" ry="1.9" opacity="0.42" transform="rotate(18 1138 363)"/><ellipse cx="988" cy="223" rx="1.4" ry="1.6" opacity="0.23" transform="rotate(66 988 223)"/><ellipse cx="957" cy="332" rx="0.9" ry="1.2" opacity="0.26" transform="rotate(-23 957 332)"/><ellipse cx="1007" cy="178" rx="1.2" ry="1.5" opacity="0.20" transform="rotate(-5 1007 178)"/><ellipse cx="1064" cy="297" rx="1.5" ry="3.1" opacity="0.16" transform="rotate(-18 1064 297)"/><ellipse cx="939" cy="280" rx="1.4" ry="2.4" opacity="0.46" transform="rotate(13 939 280)"/><ellipse cx="939" cy="188" rx="0.9" ry="2.0" opacity="0.37" transform="rotate(-4 939 188)"/><ellipse cx="949" cy="269" rx="1.2" ry="2.0" opacity="0.47" transform="rotate(133 949 269)"/><ellipse cx="907" cy="360" rx="0.5" ry="1.2" opacity="0.31" transform="rotate(-10 907 360)"/><ellipse cx="867" cy="279" rx="1.5" ry="3.0" opacity="0.41" transform="rotate(39 867 279)"/><ellipse cx="1183" cy="165" rx="0.7" ry="1.5" opacity="0.20" transform="rotate(19 1183 165)"/><ellipse cx="830" cy="406" rx="1.2" ry="1.7" opacity="0.31" transform="rotate(8 830 406)"/><ellipse cx="1099" cy="270" rx="0.6" ry="1.0" opacity="0.46" transform="rotate(-25 1099 270)"/><ellipse cx="1035" cy="417" rx="1.3" ry="1.7" opacity="0.19" transform="rotate(-27 1035 417)"/><ellipse cx="853" cy="188" rx="0.9" ry="1.9" opacity="0.47" transform="rotate(-25 853 188)"/><ellipse cx="1040" cy="445" rx="0.9" ry="1.8" opacity="0.45" transform="rotate(36 1040 445)"/><ellipse cx="879" cy="171" rx="1.2" ry="2.0" opacity="0.19" transform="rotate(110 879 171)"/><ellipse cx="1058" cy="287" rx="0.7" ry="1.4" opacity="0.42" transform="rotate(13 1058 287)"/><ellipse cx="1066" cy="206" rx="1.0" ry="1.6" opacity="0.27" transform="rotate(19 1066 206)"/><ellipse cx="1082" cy="235" rx="1.4" ry="2.6" opacity="0.48" transform="rotate(-3 1082 235)"/><ellipse cx="1128" cy="320" rx="0.8" ry="1.3" opacity="0.25" transform="rotate(19 1128 320)"/><ellipse cx="899" cy="366" rx="1.4" ry="2.1" opacity="0.19" transform="rotate(32 899 366)"/><ellipse cx="1220" cy="391" rx="0.6" ry="0.9" opacity="0.40" transform="rotate(17 1220 391)"/><ellipse cx="869" cy="153" rx="0.7" ry="1.1" opacity="0.38" transform="rotate(-26 869 153)"/><ellipse cx="970" cy="393" rx="1.1" ry="2.2" opacity="0.17" transform="rotate(2 970 393)"/><ellipse cx="892" cy="235" rx="1.3" ry="2.3" opacity="0.43" transform="rotate(173 892 235)"/><ellipse cx="1213" cy="280" rx="1.4" ry="2.2" opacity="0.28" transform="rotate(-4 1213 280)"/><ellipse cx="881" cy="342" rx="1.5" ry="3.0" opacity="0.50" transform="rotate(9 881 342)"/><ellipse cx="1135" cy="339" rx="0.8" ry="1.6" opacity="0.29" transform="rotate(39 1135 339)"/><ellipse cx="1065" cy="313" rx="1.4" ry="2.9" opacity="0.20" transform="rotate(10 1065 313)"/><ellipse cx="1082" cy="288" rx="1.3" ry="2.6" opacity="0.20" transform="rotate(7 1082 288)"/><ellipse cx="1141" cy="229" rx="1.3" ry="2.6" opacity="0.25" transform="rotate(97 1141 229)"/><ellipse cx="839" cy="294" rx="1.4" ry="3.1" opacity="0.33" transform="rotate(71 839 294)"/><ellipse cx="944" cy="250" rx="0.6" ry="1.2" opacity="0.38" transform="rotate(21 944 250)"/><ellipse cx="829" cy="297" rx="1.0" ry="1.7" opacity="0.18" transform="rotate(57 829 297)"/><ellipse cx="1023" cy="297" rx="1.2" ry="1.9" opacity="0.19" transform="rotate(18 1023 297)"/><ellipse cx="919" cy="238" rx="0.8" ry="1.5" opacity="0.26" transform="rotate(93 919 238)"/><ellipse cx="1089" cy="321" rx="0.8" ry="1.6" opacity="0.45" transform="rotate(-2 1089 321)"/><ellipse cx="922" cy="428" rx="2.2" ry="3.6" opacity="0.42" transform="rotate(-27 922 428)"/><ellipse cx="1073" cy="137" rx="1.4" ry="2.9" opacity="0.15" transform="rotate(22 1073 137)"/><ellipse cx="1171" cy="350" rx="0.6" ry="1.3" opacity="0.43" transform="rotate(1 1171 350)"/><ellipse cx="1208" cy="243" rx="1.3" ry="2.6" opacity="0.29" transform="rotate(18 1208 243)"/><ellipse cx="892" cy="261" rx="1.0" ry="2.2" opacity="0.46" transform="rotate(6 892 261)"/><ellipse cx="888" cy="353" rx="1.0" ry="1.6" opacity="0.33" transform="rotate(4 888 353)"/><ellipse cx="940" cy="135" rx="1.3" ry="2.5" opacity="0.43" transform="rotate(82 940 135)"/><ellipse cx="894" cy="236" rx="1.5" ry="2.2" opacity="0.23" transform="rotate(-12 894 236)"/><ellipse cx="1219" cy="347" rx="0.9" ry="1.7" opacity="0.37" transform="rotate(176 1219 347)"/><ellipse cx="1070" cy="322" rx="1.1" ry="2.1" opacity="0.20" transform="rotate(40 1070 322)"/><ellipse cx="944" cy="178" rx="1.5" ry="2.9" opacity="0.18" transform="rotate(25 944 178)"/><ellipse cx="1115" cy="239" rx="0.7" ry="0.9" opacity="0.50" transform="rotate(-4 1115 239)"/><ellipse cx="1107" cy="222" rx="1.4" ry="2.7" opacity="0.24" transform="rotate(97 1107 222)"/><ellipse cx="924" cy="308" rx="1.3" ry="1.4" opacity="0.43" transform="rotate(27 924 308)"/><ellipse cx="1163" cy="156" rx="1.1" ry="1.9" opacity="0.34" transform="rotate(165 1163 156)"/><ellipse cx="826" cy="350" rx="1.2" ry="2.0" opacity="0.39" transform="rotate(39 826 350)"/><ellipse cx="951" cy="204" rx="1.4" ry="1.8" opacity="0.38" transform="rotate(-25 951 204)"/><ellipse cx="1210" cy="192" rx="0.9" ry="1.3" opacity="0.48" transform="rotate(25 1210 192)"/><ellipse cx="1219" cy="347" rx="1.4" ry="2.8" opacity="0.18" transform="rotate(33 1219 347)"/><ellipse cx="1194" cy="409" rx="0.6" ry="0.8" opacity="0.39" transform="rotate(-28 1194 409)"/><ellipse cx="979" cy="358" rx="1.2" ry="2.7" opacity="0.48" transform="rotate(35 979 358)"/><ellipse cx="1139" cy="446" rx="1.1" ry="2.3" opacity="0.21" transform="rotate(24 1139 446)"/><ellipse cx="983" cy="354" rx="1.5" ry="2.4" opacity="0.22" transform="rotate(12 983 354)"/><ellipse cx="1207" cy="348" rx="1.5" ry="3.1" opacity="0.27" transform="rotate(-6 1207 348)"/><ellipse cx="887" cy="232" rx="0.8" ry="1.6" opacity="0.23" transform="rotate(32 887 232)"/><ellipse cx="932" cy="303" rx="1.4" ry="1.9" opacity="0.36" transform="rotate(12 932 303)"/><ellipse cx="1024" cy="357" rx="0.8" ry="1.6" opacity="0.43" transform="rotate(8 1024 357)"/><ellipse cx="1160" cy="315" rx="1.1" ry="1.8" opacity="0.18" transform="rotate(180 1160 315)"/><ellipse cx="1134" cy="237" rx="1.3" ry="2.0" opacity="0.36" transform="rotate(22 1134 237)"/><ellipse cx="1037" cy="312" rx="0.7" ry="1.1" opacity="0.26" transform="rotate(25 1037 312)"/><ellipse cx="884" cy="173" rx="1.2" ry="2.5" opacity="0.48" transform="rotate(2 884 173)"/><ellipse cx="865" cy="406" rx="1.5" ry="2.9" opacity="0.19" transform="rotate(105 865 406)"/><ellipse cx="863" cy="257" rx="1.3" ry="2.2" opacity="0.18" transform="rotate(14 863 257)"/><ellipse cx="1198" cy="345" rx="0.7" ry="1.5" opacity="0.19" transform="rotate(161 1198 345)"/><ellipse cx="1152" cy="283" rx="0.5" ry="0.7" opacity="0.39" transform="rotate(1 1152 283)"/><ellipse cx="1130" cy="309" rx="2.2" ry="4.5" opacity="0.30" transform="rotate(37 1130 309)"/><ellipse cx="1022" cy="299" rx="0.8" ry="0.9" opacity="0.37" transform="rotate(85 1022 299)"/><ellipse cx="1111" cy="373" rx="1.1" ry="1.8" opacity="0.24" transform="rotate(36 1111 373)"/><ellipse cx="1198" cy="229" rx="1.1" ry="1.7" opacity="0.27" transform="rotate(15 1198 229)"/><ellipse cx="882" cy="249" rx="1.4" ry="2.4" opacity="0.15" transform="rotate(48 882 249)"/><ellipse cx="941" cy="395" rx="1.0" ry="1.1" opacity="0.34" transform="rotate(-26 941 395)"/><ellipse cx="1115" cy="151" rx="0.8" ry="1.6" opacity="0.30" transform="rotate(170 1115 151)"/><ellipse cx="867" cy="230" rx="1.2" ry="2.0" opacity="0.38" transform="rotate(80 867 230)"/><ellipse cx="1191" cy="347" rx="1.3" ry="2.5" opacity="0.43" transform="rotate(147 1191 347)"/><ellipse cx="822" cy="386" rx="1.5" ry="2.8" opacity="0.38" transform="rotate(17 822 386)"/><ellipse cx="871" cy="212" rx="0.8" ry="1.2" opacity="0.36" transform="rotate(24 871 212)"/><ellipse cx="1086" cy="268" rx="0.9" ry="1.4" opacity="0.15" transform="rotate(89 1086 268)"/><ellipse cx="1005" cy="262" rx="1.4" ry="2.4" opacity="0.23" transform="rotate(13 1005 262)"/><ellipse cx="974" cy="347" rx="0.7" ry="1.3" opacity="0.48" transform="rotate(-7 974 347)"/><ellipse cx="1172" cy="250" rx="1.5" ry="3.0" opacity="0.25" transform="rotate(7 1172 250)"/><ellipse cx="1002" cy="259" rx="1.3" ry="2.2" opacity="0.48" transform="rotate(78 1002 259)"/><ellipse cx="1119" cy="311" rx="1.0" ry="2.3" opacity="0.30" transform="rotate(42 1119 311)"/><ellipse cx="836" cy="266" rx="1.0" ry="1.6" opacity="0.43" transform="rotate(90 836 266)"/><ellipse cx="981" cy="134" rx="0.6" ry="0.8" opacity="0.37" transform="rotate(174 981 134)"/><ellipse cx="1023" cy="261" rx="0.6" ry="0.7" opacity="0.48" transform="rotate(-16 1023 261)"/><ellipse cx="804" cy="277" rx="1.1" ry="2.4" opacity="0.32" transform="rotate(25 804 277)"/><ellipse cx="1063" cy="145" rx="2.1" ry="2.3" opacity="0.32" transform="rotate(13 1063 145)"/><ellipse cx="1065" cy="196" rx="0.7" ry="1.5" opacity="0.46" transform="rotate(115 1065 196)"/><ellipse cx="911" cy="331" rx="1.4" ry="2.0" opacity="0.40" transform="rotate(66 911 331)"/><ellipse cx="937" cy="308" rx="0.5" ry="1.1" opacity="0.18" transform="rotate(113 937 308)"/><ellipse cx="1090" cy="290" rx="1.3" ry="2.9" opacity="0.18" transform="rotate(41 1090 290)"/><ellipse cx="964" cy="235" rx="1.3" ry="2.2" opacity="0.27" transform="rotate(3 964 235)"/><ellipse cx="966" cy="301" rx="0.9" ry="1.9" opacity="0.48" transform="rotate(78 966 301)"/><ellipse cx="1150" cy="395" rx="0.9" ry="1.6" opacity="0.42" transform="rotate(104 1150 395)"/><ellipse cx="961" cy="206" rx="0.7" ry="0.7" opacity="0.35" transform="rotate(27 961 206)"/><ellipse cx="879" cy="242" rx="1.0" ry="1.3" opacity="0.46" transform="rotate(52 879 242)"/><ellipse cx="844" cy="145" rx="1.0" ry="1.7" opacity="0.16" transform="rotate(-10 844 145)"/><ellipse cx="956" cy="409" rx="1.2" ry="2.5" opacity="0.25" transform="rotate(-5 956 409)"/><ellipse cx="915" cy="337" rx="1.3" ry="2.4" opacity="0.36" transform="rotate(-16 915 337)"/><ellipse cx="814" cy="191" rx="0.5" ry="0.6" opacity="0.38" transform="rotate(60 814 191)"/><ellipse cx="946" cy="408" rx="0.7" ry="1.2" opacity="0.30" transform="rotate(103 946 408)"/><ellipse cx="1041" cy="401" rx="0.7" ry="1.5" opacity="0.30" transform="rotate(0 1041 401)"/><ellipse cx="925" cy="237" rx="1.3" ry="1.9" opacity="0.32" transform="rotate(-26 925 237)"/><ellipse cx="1118" cy="373" rx="2.0" ry="3.9" opacity="0.26" transform="rotate(137 1118 373)"/><ellipse cx="1168" cy="150" rx="0.6" ry="0.7" opacity="0.21" transform="rotate(120 1168 150)"/><ellipse cx="1029" cy="226" rx="0.9" ry="1.1" opacity="0.47" transform="rotate(3 1029 226)"/><ellipse cx="934" cy="248" rx="0.6" ry="1.3" opacity="0.33" transform="rotate(160 934 248)"/><ellipse cx="1015" cy="261" rx="0.9" ry="1.5" opacity="0.34" transform="rotate(7 1015 261)"/><ellipse cx="979" cy="366" rx="1.1" ry="1.3" opacity="0.33" transform="rotate(166 979 366)"/><ellipse cx="1118" cy="274" rx="0.9" ry="1.6" opacity="0.50" transform="rotate(34 1118 274)"/><ellipse cx="907" cy="269" rx="1.6" ry="2.5" opacity="0.25" transform="rotate(-5 907 269)"/><ellipse cx="1084" cy="353" rx="1.1" ry="1.4" opacity="0.48" transform="rotate(0 1084 353)"/><ellipse cx="876" cy="277" rx="1.4" ry="2.7" opacity="0.31" transform="rotate(8 876 277)"/><ellipse cx="906" cy="229" rx="0.7" ry="1.5" opacity="0.49" transform="rotate(-17 906 229)"/><ellipse cx="827" cy="141" rx="1.3" ry="1.6" opacity="0.16" transform="rotate(85 827 141)"/><ellipse cx="1184" cy="365" rx="1.4" ry="1.5" opacity="0.39" transform="rotate(55 1184 365)"/><ellipse cx="939" cy="214" rx="1.2" ry="1.3" opacity="0.24" transform="rotate(15 939 214)"/><ellipse cx="1021" cy="355" rx="1.3" ry="2.6" opacity="0.38" transform="rotate(69 1021 355)"/><ellipse cx="1143" cy="321" rx="1.5" ry="2.3" opacity="0.16" transform="rotate(67 1143 321)"/><ellipse cx="1174" cy="242" rx="1.9" ry="2.2" opacity="0.38" transform="rotate(113 1174 242)"/><ellipse cx="1005" cy="251" rx="1.4" ry="1.6" opacity="0.31" transform="rotate(29 1005 251)"/><ellipse cx="1109" cy="146" rx="1.3" ry="1.7" opacity="0.16" transform="rotate(158 1109 146)"/><ellipse cx="998" cy="240" rx="0.8" ry="1.9" opacity="0.36" transform="rotate(32 998 240)"/><ellipse cx="1065" cy="401" rx="0.7" ry="0.9" opacity="0.28" transform="rotate(-20 1065 401)"/><ellipse cx="979" cy="289" rx="1.1" ry="1.5" opacity="0.15" transform="rotate(106 979 289)"/><ellipse cx="973" cy="407" rx="0.7" ry="1.4" opacity="0.47" transform="rotate(118 973 407)"/><ellipse cx="960" cy="421" rx="1.3" ry="2.5" opacity="0.21" transform="rotate(154 960 421)"/><ellipse cx="1209" cy="267" rx="1.4" ry="2.1" opacity="0.49" transform="rotate(104 1209 267)"/><ellipse cx="1158" cy="338" rx="1.5" ry="1.9" opacity="0.35" transform="rotate(-21 1158 338)"/><ellipse cx="941" cy="257" rx="1.5" ry="2.3" opacity="0.38" transform="rotate(30 941 257)"/><ellipse cx="986" cy="233" rx="1.3" ry="1.8" opacity="0.27" transform="rotate(-30 986 233)"/><ellipse cx="1074" cy="279" rx="1.0" ry="1.1" opacity="0.47" transform="rotate(32 1074 279)"/><ellipse cx="1199" cy="263" rx="0.8" ry="1.3" opacity="0.41" transform="rotate(2 1199 263)"/><ellipse cx="1080" cy="434" rx="0.6" ry="1.1" opacity="0.30" transform="rotate(29 1080 434)"/><ellipse cx="1088" cy="437" rx="0.9" ry="1.0" opacity="0.31" transform="rotate(123 1088 437)"/><ellipse cx="960" cy="166" rx="1.1" ry="1.3" opacity="0.16" transform="rotate(12 960 166)"/><ellipse cx="835" cy="189" rx="0.8" ry="1.1" opacity="0.40" transform="rotate(32 835 189)"/><ellipse cx="1089" cy="439" rx="0.8" ry="1.6" opacity="0.31" transform="rotate(86 1089 439)"/><ellipse cx="1072" cy="258" rx="0.8" ry="1.3" opacity="0.28" transform="rotate(173 1072 258)"/><ellipse cx="916" cy="229" rx="0.8" ry="1.8" opacity="0.48" transform="rotate(18 916 229)"/><ellipse cx="823" cy="257" rx="0.6" ry="1.1" opacity="0.20" transform="rotate(-0 823 257)"/><ellipse cx="981" cy="363" rx="2.4" ry="2.8" opacity="0.46" transform="rotate(4 981 363)"/><ellipse cx="1153" cy="189" rx="1.1" ry="1.4" opacity="0.21" transform="rotate(39 1153 189)"/><ellipse cx="1142" cy="401" rx="0.6" ry="0.7" opacity="0.31" transform="rotate(33 1142 401)"/><ellipse cx="1188" cy="187" rx="1.0" ry="1.5" opacity="0.42" transform="rotate(37 1188 187)"/><ellipse cx="1064" cy="232" rx="1.2" ry="2.7" opacity="0.16" transform="rotate(25 1064 232)"/><ellipse cx="914" cy="261" rx="0.7" ry="1.3" opacity="0.27" transform="rotate(-1 914 261)"/><ellipse cx="1053" cy="311" rx="0.7" ry="1.4" opacity="0.38" transform="rotate(-4 1053 311)"/><ellipse cx="942" cy="245" rx="0.6" ry="1.0" opacity="0.49" transform="rotate(143 942 245)"/><ellipse cx="944" cy="219" rx="0.9" ry="1.4" opacity="0.27" transform="rotate(-5 944 219)"/><ellipse cx="966" cy="334" rx="0.8" ry="1.1" opacity="0.43" transform="rotate(54 966 334)"/><ellipse cx="1099" cy="441" rx="1.0" ry="1.9" opacity="0.42" transform="rotate(4 1099 441)"/><ellipse cx="934" cy="294" rx="0.8" ry="1.3" opacity="0.41" transform="rotate(115 934 294)"/><ellipse cx="1138" cy="292" rx="0.6" ry="1.2" opacity="0.23" transform="rotate(88 1138 292)"/><ellipse cx="914" cy="323" rx="1.5" ry="2.3" opacity="0.45" transform="rotate(10 914 323)"/><ellipse cx="934" cy="201" rx="0.7" ry="1.2" opacity="0.26" transform="rotate(-9 934 201)"/><ellipse cx="1076" cy="280" rx="1.3" ry="2.4" opacity="0.34" transform="rotate(93 1076 280)"/><ellipse cx="1036" cy="306" rx="0.7" ry="1.5" opacity="0.30" transform="rotate(102 1036 306)"/><ellipse cx="1061" cy="163" rx="0.8" ry="1.3" opacity="0.28" transform="rotate(38 1061 163)"/><ellipse cx="1032" cy="172" rx="1.2" ry="1.9" opacity="0.22" transform="rotate(46 1032 172)"/><ellipse cx="1065" cy="328" rx="1.8" ry="2.8" opacity="0.50" transform="rotate(28 1065 328)"/><ellipse cx="944" cy="208" rx="1.2" ry="2.6" opacity="0.36" transform="rotate(66 944 208)"/><ellipse cx="1226" cy="175" rx="1.0" ry="1.2" opacity="0.23" transform="rotate(130 1226 175)"/><ellipse cx="883" cy="311" rx="0.9" ry="1.4" opacity="0.40" transform="rotate(-7 883 311)"/><ellipse cx="861" cy="267" rx="1.4" ry="2.5" opacity="0.38" transform="rotate(-14 861 267)"/><ellipse cx="943" cy="339" rx="0.6" ry="1.2" opacity="0.28" transform="rotate(-18 943 339)"/><ellipse cx="1021" cy="231" rx="1.3" ry="2.9" opacity="0.28" transform="rotate(16 1021 231)"/><ellipse cx="961" cy="288" rx="0.6" ry="1.4" opacity="0.17" transform="rotate(-9 961 288)"/><ellipse cx="1093" cy="282" rx="1.3" ry="1.6" opacity="0.30" transform="rotate(29 1093 282)"/><ellipse cx="824" cy="363" rx="0.5" ry="0.8" opacity="0.43" transform="rotate(14 824 363)"/><ellipse cx="1019" cy="423" rx="1.4" ry="1.7" opacity="0.17" transform="rotate(98 1019 423)"/><ellipse cx="1031" cy="247" rx="1.0" ry="1.1" opacity="0.43" transform="rotate(-24 1031 247)"/><ellipse cx="995" cy="325" rx="0.9" ry="1.3" opacity="0.46" transform="rotate(-5 995 325)"/><ellipse cx="1182" cy="374" rx="1.1" ry="1.8" opacity="0.41" transform="rotate(5 1182 374)"/><ellipse cx="998" cy="299" rx="1.1" ry="1.9" opacity="0.45" transform="rotate(-26 998 299)"/><ellipse cx="859" cy="132" rx="1.1" ry="2.4" opacity="0.46" transform="rotate(20 859 132)"/><ellipse cx="985" cy="234" rx="1.4" ry="2.2" opacity="0.42" transform="rotate(74 985 234)"/><ellipse cx="829" cy="426" rx="1.0" ry="1.2" opacity="0.27" transform="rotate(159 829 426)"/><ellipse cx="923" cy="308" rx="1.2" ry="1.4" opacity="0.29" transform="rotate(78 923 308)"/><ellipse cx="1197" cy="418" rx="1.3" ry="1.8" opacity="0.31" transform="rotate(109 1197 418)"/><ellipse cx="928" cy="337" rx="0.6" ry="1.4" opacity="0.48" transform="rotate(36 928 337)"/><ellipse cx="1106" cy="280" rx="1.2" ry="2.5" opacity="0.24" transform="rotate(119 1106 280)"/><ellipse cx="861" cy="212" rx="1.5" ry="1.9" opacity="0.19" transform="rotate(126 861 212)"/><ellipse cx="1150" cy="310" rx="0.6" ry="1.1" opacity="0.44" transform="rotate(11 1150 310)"/><ellipse cx="855" cy="219" rx="1.4" ry="1.8" opacity="0.30" transform="rotate(177 855 219)"/><ellipse cx="1142" cy="277" rx="0.7" ry="1.2" opacity="0.34" transform="rotate(1 1142 277)"/><ellipse cx="1156" cy="173" rx="1.5" ry="3.1" opacity="0.20" transform="rotate(26 1156 173)"/><ellipse cx="1063" cy="242" rx="0.8" ry="1.0" opacity="0.17" transform="rotate(164 1063 242)"/><ellipse cx="1145" cy="434" rx="1.3" ry="3.0" opacity="0.16" transform="rotate(115 1145 434)"/><ellipse cx="1220" cy="318" rx="1.4" ry="2.7" opacity="0.31" transform="rotate(33 1220 318)"/><ellipse cx="1191" cy="149" rx="1.8" ry="2.4" opacity="0.46" transform="rotate(10 1191 149)"/><ellipse cx="900" cy="280" rx="0.5" ry="1.0" opacity="0.35" transform="rotate(58 900 280)"/><ellipse cx="972" cy="213" rx="1.4" ry="2.5" opacity="0.28" transform="rotate(-1 972 213)"/><ellipse cx="1116" cy="148" rx="0.6" ry="1.3" opacity="0.50" transform="rotate(24 1116 148)"/><ellipse cx="1059" cy="173" rx="1.5" ry="2.5" opacity="0.49" transform="rotate(-3 1059 173)"/><ellipse cx="1033" cy="356" rx="1.1" ry="1.6" opacity="0.47" transform="rotate(160 1033 356)"/><ellipse cx="954" cy="320" rx="1.3" ry="2.2" opacity="0.39" transform="rotate(-14 954 320)"/><ellipse cx="859" cy="398" rx="1.3" ry="2.5" opacity="0.32" transform="rotate(1 859 398)"/><ellipse cx="1090" cy="167" rx="1.2" ry="2.4" opacity="0.42" transform="rotate(74 1090 167)"/><ellipse cx="1094" cy="223" rx="0.6" ry="0.9" opacity="0.47" transform="rotate(16 1094 223)"/><ellipse cx="1033" cy="308" rx="1.1" ry="2.1" opacity="0.25" transform="rotate(-14 1033 308)"/><ellipse cx="871" cy="314" rx="0.9" ry="1.6" opacity="0.26" transform="rotate(77 871 314)"/><ellipse cx="824" cy="175" rx="0.6" ry="1.1" opacity="0.39" transform="rotate(28 824 175)"/><ellipse cx="872" cy="283" rx="0.6" ry="0.8" opacity="0.44" transform="rotate(30 872 283)"/><ellipse cx="1111" cy="324" rx="0.7" ry="1.1" opacity="0.38" transform="rotate(-23 1111 324)"/><ellipse cx="1173" cy="366" rx="0.9" ry="1.2" opacity="0.44" transform="rotate(98 1173 366)"/><ellipse cx="898" cy="193" rx="1.0" ry="1.4" opacity="0.18" transform="rotate(19 898 193)"/><ellipse cx="1174" cy="323" rx="1.0" ry="1.9" opacity="0.23" transform="rotate(-26 1174 323)"/><ellipse cx="905" cy="279" rx="0.8" ry="1.8" opacity="0.30" transform="rotate(3 905 279)"/><ellipse cx="870" cy="217" rx="1.3" ry="2.7" opacity="0.26" transform="rotate(-20 870 217)"/><ellipse cx="871" cy="412" rx="1.2" ry="2.5" opacity="0.32" transform="rotate(150 871 412)"/><ellipse cx="1204" cy="335" rx="1.0" ry="2.2" opacity="0.30" transform="rotate(31 1204 335)"/><ellipse cx="1194" cy="216" rx="1.1" ry="1.3" opacity="0.48" transform="rotate(5 1194 216)"/><ellipse cx="1214" cy="278" rx="1.0" ry="1.3" opacity="0.28" transform="rotate(5 1214 278)"/><ellipse cx="976" cy="176" rx="1.0" ry="1.1" opacity="0.18" transform="rotate(-0 976 176)"/><ellipse cx="1170" cy="305" rx="0.7" ry="0.9" opacity="0.35" transform="rotate(15 1170 305)"/><ellipse cx="982" cy="316" rx="2.1" ry="2.4" opacity="0.21" transform="rotate(-15 982 316)"/><ellipse cx="1042" cy="370" rx="0.6" ry="1.2" opacity="0.38" transform="rotate(-5 1042 370)"/><ellipse cx="1189" cy="367" rx="0.8" ry="1.4" opacity="0.42" transform="rotate(-12 1189 367)"/><ellipse cx="949" cy="432" rx="1.1" ry="1.5" opacity="0.26" transform="rotate(-22 949 432)"/><ellipse cx="1181" cy="372" rx="0.6" ry="1.3" opacity="0.28" transform="rotate(35 1181 372)"/><ellipse cx="1199" cy="327" rx="1.1" ry="1.6" opacity="0.35" transform="rotate(-13 1199 327)"/><ellipse cx="898" cy="139" rx="0.9" ry="1.4" opacity="0.34" transform="rotate(6 898 139)"/><ellipse cx="1039" cy="305" rx="0.7" ry="0.9" opacity="0.46" transform="rotate(53 1039 305)"/><ellipse cx="941" cy="300" rx="1.3" ry="1.6" opacity="0.25" transform="rotate(-16 941 300)"/><ellipse cx="980" cy="175" rx="1.2" ry="2.4" opacity="0.31" transform="rotate(-20 980 175)"/><ellipse cx="989" cy="426" rx="0.7" ry="1.0" opacity="0.32" transform="rotate(99 989 426)"/><ellipse cx="1218" cy="287" rx="1.5" ry="2.8" opacity="0.18" transform="rotate(-29 1218 287)"/><ellipse cx="988" cy="365" rx="1.1" ry="2.1" opacity="0.38" transform="rotate(9 988 365)"/><ellipse cx="1148" cy="267" rx="0.7" ry="1.1" opacity="0.21" transform="rotate(32 1148 267)"/><ellipse cx="1021" cy="278" rx="1.5" ry="3.2" opacity="0.37" transform="rotate(29 1021 278)"/><ellipse cx="966" cy="430" rx="1.1" ry="2.5" opacity="0.15" transform="rotate(10 966 430)"/><ellipse cx="1056" cy="216" rx="1.8" ry="3.4" opacity="0.38" transform="rotate(4 1056 216)"/><ellipse cx="1035" cy="345" rx="0.9" ry="1.8" opacity="0.37" transform="rotate(14 1035 345)"/><ellipse cx="1162" cy="270" rx="0.8" ry="1.2" opacity="0.30" transform="rotate(46 1162 270)"/><ellipse cx="1133" cy="284" rx="0.9" ry="1.2" opacity="0.30" transform="rotate(-14 1133 284)"/><ellipse cx="1034" cy="284" rx="0.6" ry="1.2" opacity="0.16" transform="rotate(89 1034 284)"/><ellipse cx="1023" cy="297" rx="0.6" ry="0.8" opacity="0.49" transform="rotate(15 1023 297)"/><ellipse cx="1088" cy="206" rx="0.9" ry="1.5" opacity="0.47" transform="rotate(36 1088 206)"/><ellipse cx="1009" cy="204" rx="0.9" ry="1.5" opacity="0.27" transform="rotate(-2 1009 204)"/><ellipse cx="1051" cy="368" rx="1.5" ry="2.2" opacity="0.31" transform="rotate(6 1051 368)"/><ellipse cx="1222" cy="401" rx="1.0" ry="1.1" opacity="0.46" transform="rotate(106 1222 401)"/><ellipse cx="991" cy="301" rx="1.2" ry="2.5" opacity="0.24" transform="rotate(25 991 301)"/><ellipse cx="1041" cy="402" rx="0.8" ry="0.8" opacity="0.47" transform="rotate(122 1041 402)"/><ellipse cx="1011" cy="257" rx="0.6" ry="1.2" opacity="0.39" transform="rotate(95 1011 257)"/><ellipse cx="896" cy="242" rx="1.3" ry="1.9" opacity="0.31" transform="rotate(11 896 242)"/><ellipse cx="909" cy="233" rx="1.2" ry="1.9" opacity="0.34" transform="rotate(89 909 233)"/><ellipse cx="985" cy="319" rx="0.6" ry="0.9" opacity="0.47" transform="rotate(-2 985 319)"/><ellipse cx="918" cy="260" rx="1.2" ry="2.5" opacity="0.21" transform="rotate(84 918 260)"/><ellipse cx="1050" cy="142" rx="0.7" ry="1.3" opacity="0.36" transform="rotate(7 1050 142)"/><ellipse cx="925" cy="380" rx="1.0" ry="1.6" opacity="0.35" transform="rotate(83 925 380)"/><ellipse cx="1220" cy="392" rx="1.3" ry="2.5" opacity="0.24" transform="rotate(-23 1220 392)"/><ellipse cx="867" cy="268" rx="0.9" ry="1.9" opacity="0.47" transform="rotate(25 867 268)"/><ellipse cx="893" cy="314" rx="1.1" ry="2.3" opacity="0.43" transform="rotate(175 893 314)"/><ellipse cx="1021" cy="220" rx="0.7" ry="1.0" opacity="0.43" transform="rotate(51 1021 220)"/><ellipse cx="1031" cy="379" rx="1.0" ry="2.0" opacity="0.39" transform="rotate(26 1031 379)"/><ellipse cx="1151" cy="394" rx="0.7" ry="1.2" opacity="0.28" transform="rotate(147 1151 394)"/><ellipse cx="1197" cy="273" rx="1.3" ry="2.9" opacity="0.38" transform="rotate(86 1197 273)"/><ellipse cx="1043" cy="407" rx="0.7" ry="1.0" opacity="0.36" transform="rotate(37 1043 407)"/><ellipse cx="948" cy="203" rx="1.4" ry="2.4" opacity="0.36" transform="rotate(-11 948 203)"/><ellipse cx="918" cy="375" rx="0.6" ry="0.9" opacity="0.16" transform="rotate(133 918 375)"/><ellipse cx="862" cy="249" rx="0.8" ry="1.6" opacity="0.41" transform="rotate(35 862 249)"/><ellipse cx="878" cy="362" rx="0.7" ry="1.0" opacity="0.27" transform="rotate(29 878 362)"/><ellipse cx="926" cy="379" rx="0.8" ry="1.0" opacity="0.22" transform="rotate(89 926 379)"/><ellipse cx="1197" cy="261" rx="1.1" ry="1.3" opacity="0.26" transform="rotate(1 1197 261)"/><ellipse cx="891" cy="331" rx="1.3" ry="2.5" opacity="0.38" transform="rotate(111 891 331)"/><ellipse cx="1119" cy="207" rx="1.0" ry="2.2" opacity="0.26" transform="rotate(-26 1119 207)"/><ellipse cx="1071" cy="377" rx="1.3" ry="2.6" opacity="0.37" transform="rotate(14 1071 377)"/><ellipse cx="999" cy="326" rx="0.5" ry="0.9" opacity="0.21" transform="rotate(-23 999 326)"/><ellipse cx="981" cy="240" rx="0.9" ry="1.6" opacity="0.26" transform="rotate(-10 981 240)"/><ellipse cx="1039" cy="249" rx="0.9" ry="1.6" opacity="0.18" transform="rotate(169 1039 249)"/><ellipse cx="995" cy="170" rx="1.0" ry="1.3" opacity="0.31" transform="rotate(8 995 170)"/><ellipse cx="1140" cy="254" rx="0.8" ry="1.1" opacity="0.41" transform="rotate(84 1140 254)"/><ellipse cx="1033" cy="428" rx="1.0" ry="2.0" opacity="0.30" transform="rotate(74 1033 428)"/><ellipse cx="912" cy="144" rx="1.0" ry="1.4" opacity="0.40" transform="rotate(112 912 144)"/><ellipse cx="1128" cy="235" rx="1.0" ry="1.7" opacity="0.28" transform="rotate(81 1128 235)"/><ellipse cx="1164" cy="207" rx="0.6" ry="0.8" opacity="0.31" transform="rotate(8 1164 207)"/><ellipse cx="1133" cy="233" rx="1.5" ry="3.1" opacity="0.29" transform="rotate(36 1133 233)"/><ellipse cx="880" cy="280" rx="0.7" ry="0.9" opacity="0.21" transform="rotate(-27 880 280)"/><ellipse cx="1133" cy="258" rx="1.0" ry="2.1" opacity="0.31" transform="rotate(133 1133 258)"/><ellipse cx="923" cy="157" rx="1.2" ry="1.4" opacity="0.25" transform="rotate(-28 923 157)"/><ellipse cx="835" cy="246" rx="2.1" ry="2.3" opacity="0.29" transform="rotate(30 835 246)"/><ellipse cx="1053" cy="205" rx="1.0" ry="2.1" opacity="0.49" transform="rotate(133 1053 205)"/><ellipse cx="1125" cy="215" rx="0.6" ry="1.2" opacity="0.47" transform="rotate(15 1125 215)"/><ellipse cx="1145" cy="271" rx="0.9" ry="1.8" opacity="0.36" transform="rotate(49 1145 271)"/><ellipse cx="949" cy="139" rx="1.1" ry="2.0" opacity="0.35" transform="rotate(21 949 139)"/><ellipse cx="1103" cy="433" rx="1.4" ry="3.1" opacity="0.25" transform="rotate(-24 1103 433)"/><ellipse cx="830" cy="219" rx="1.0" ry="1.4" opacity="0.22" transform="rotate(-29 830 219)"/><ellipse cx="914" cy="191" rx="1.0" ry="2.4" opacity="0.30" transform="rotate(-24 914 191)"/><ellipse cx="914" cy="282" rx="1.5" ry="3.4" opacity="0.30" transform="rotate(177 914 282)"/><ellipse cx="1028" cy="419" rx="1.5" ry="3.0" opacity="0.24" transform="rotate(14 1028 419)"/><ellipse cx="1088" cy="432" rx="1.3" ry="2.2" opacity="0.32" transform="rotate(-4 1088 432)"/><ellipse cx="1083" cy="233" rx="0.5" ry="1.2" opacity="0.42" transform="rotate(2 1083 233)"/><ellipse cx="1105" cy="309" rx="1.5" ry="3.3" opacity="0.37" transform="rotate(132 1105 309)"/><ellipse cx="1202" cy="420" rx="1.0" ry="1.2" opacity="0.33" transform="rotate(25 1202 420)"/><ellipse cx="1051" cy="254" rx="0.9" ry="1.8" opacity="0.29" transform="rotate(13 1051 254)"/><ellipse cx="896" cy="319" rx="1.1" ry="1.7" opacity="0.20" transform="rotate(67 896 319)"/><ellipse cx="835" cy="264" rx="0.9" ry="1.9" opacity="0.22" transform="rotate(3 835 264)"/><ellipse cx="1106" cy="362" rx="1.0" ry="1.4" opacity="0.26" transform="rotate(9 1106 362)"/><ellipse cx="934" cy="214" rx="1.2" ry="2.7" opacity="0.21" transform="rotate(87 934 214)"/><ellipse cx="863" cy="199" rx="1.9" ry="2.3" opacity="0.39" transform="rotate(31 863 199)"/><ellipse cx="1091" cy="308" rx="1.0" ry="1.4" opacity="0.29" transform="rotate(46 1091 308)"/><ellipse cx="840" cy="408" rx="1.5" ry="1.9" opacity="0.37" transform="rotate(69 840 408)"/><ellipse cx="1178" cy="289" rx="0.8" ry="1.6" opacity="0.22" transform="rotate(82 1178 289)"/><ellipse cx="952" cy="365" rx="0.9" ry="1.1" opacity="0.19" transform="rotate(45 952 365)"/><ellipse cx="821" cy="296" rx="0.6" ry="1.0" opacity="0.15" transform="rotate(155 821 296)"/><ellipse cx="1108" cy="259" rx="0.7" ry="1.2" opacity="0.40" transform="rotate(15 1108 259)"/><ellipse cx="1056" cy="190" rx="1.2" ry="1.9" opacity="0.29" transform="rotate(97 1056 190)"/><ellipse cx="1062" cy="290" rx="1.0" ry="2.3" opacity="0.30" transform="rotate(27 1062 290)"/><ellipse cx="819" cy="250" rx="1.1" ry="2.2" opacity="0.46" transform="rotate(-19 819 250)"/><ellipse cx="1072" cy="301" rx="0.5" ry="0.9" opacity="0.26" transform="rotate(-19 1072 301)"/><ellipse cx="932" cy="217" rx="1.0" ry="2.1" opacity="0.48" transform="rotate(122 932 217)"/><ellipse cx="1123" cy="316" rx="1.0" ry="1.3" opacity="0.16" transform="rotate(-11 1123 316)"/><ellipse cx="1158" cy="180" rx="1.2" ry="1.9" opacity="0.48" transform="rotate(-26 1158 180)"/><ellipse cx="1046" cy="284" rx="0.7" ry="1.1" opacity="0.36" transform="rotate(-24 1046 284)"/><ellipse cx="829" cy="188" rx="1.4" ry="2.6" opacity="0.15" transform="rotate(-25 829 188)"/><ellipse cx="989" cy="233" rx="1.3" ry="2.7" opacity="0.20" transform="rotate(17 989 233)"/><ellipse cx="934" cy="263" rx="2.0" ry="2.7" opacity="0.46" transform="rotate(48 934 263)"/><ellipse cx="1039" cy="151" rx="0.6" ry="1.1" opacity="0.34" transform="rotate(51 1039 151)"/><ellipse cx="1021" cy="185" rx="1.3" ry="2.3" opacity="0.16" transform="rotate(87 1021 185)"/><ellipse cx="896" cy="198" rx="1.4" ry="2.8" opacity="0.24" transform="rotate(20 896 198)"/><ellipse cx="971" cy="333" rx="1.1" ry="1.2" opacity="0.24" transform="rotate(-17 971 333)"/><ellipse cx="1053" cy="353" rx="1.0" ry="2.1" opacity="0.45" transform="rotate(5 1053 353)"/><ellipse cx="964" cy="351" rx="1.1" ry="1.2" opacity="0.29" transform="rotate(109 964 351)"/><ellipse cx="934" cy="307" rx="0.7" ry="1.7" opacity="0.41" transform="rotate(-5 934 307)"/><ellipse cx="965" cy="308" rx="0.8" ry="1.0" opacity="0.33" transform="rotate(-27 965 308)"/><ellipse cx="1116" cy="340" rx="0.5" ry="1.2" opacity="0.42" transform="rotate(8 1116 340)"/><ellipse cx="1058" cy="243" rx="1.4" ry="1.9" opacity="0.29" transform="rotate(174 1058 243)"/><ellipse cx="1214" cy="261" rx="1.4" ry="3.0" opacity="0.49" transform="rotate(90 1214 261)"/><ellipse cx="975" cy="444" rx="1.3" ry="2.3" opacity="0.47" transform="rotate(8 975 444)"/><ellipse cx="1061" cy="154" rx="1.1" ry="1.7" opacity="0.44" transform="rotate(25 1061 154)"/><ellipse cx="861" cy="229" rx="0.7" ry="0.8" opacity="0.24" transform="rotate(24 861 229)"/><ellipse cx="905" cy="317" rx="1.3" ry="1.9" opacity="0.32" transform="rotate(9 905 317)"/><ellipse cx="1050" cy="312" rx="0.7" ry="1.6" opacity="0.29" transform="rotate(38 1050 312)"/><ellipse cx="1217" cy="397" rx="0.9" ry="1.2" opacity="0.34" transform="rotate(-6 1217 397)"/><ellipse cx="1034" cy="307" rx="1.2" ry="2.2" opacity="0.33" transform="rotate(-1 1034 307)"/><ellipse cx="996" cy="382" rx="1.3" ry="1.6" opacity="0.33" transform="rotate(31 996 382)"/><ellipse cx="948" cy="361" rx="0.9" ry="1.6" opacity="0.26" transform="rotate(110 948 361)"/><ellipse cx="967" cy="440" rx="1.4" ry="3.0" opacity="0.49" transform="rotate(18 967 440)"/><ellipse cx="1052" cy="407" rx="1.3" ry="1.9" opacity="0.49" transform="rotate(115 1052 407)"/><ellipse cx="1209" cy="150" rx="1.1" ry="2.4" opacity="0.24" transform="rotate(16 1209 150)"/><ellipse cx="1127" cy="409" rx="1.2" ry="2.2" opacity="0.20" transform="rotate(43 1127 409)"/><ellipse cx="1080" cy="139" rx="0.9" ry="2.0" opacity="0.25" transform="rotate(40 1080 139)"/><ellipse cx="928" cy="226" rx="0.8" ry="1.1" opacity="0.39" transform="rotate(21 928 226)"/><ellipse cx="1134" cy="342" rx="1.2" ry="1.7" opacity="0.16" transform="rotate(6 1134 342)"/><ellipse cx="1201" cy="322" rx="1.0" ry="1.5" opacity="0.15" transform="rotate(-14 1201 322)"/><ellipse cx="805" cy="208" rx="1.2" ry="2.0" opacity="0.42" transform="rotate(6 805 208)"/><ellipse cx="1199" cy="415" rx="1.5" ry="3.0" opacity="0.40" transform="rotate(103 1199 415)"/><ellipse cx="814" cy="272" rx="1.4" ry="2.7" opacity="0.48" transform="rotate(23 814 272)"/><ellipse cx="1059" cy="304" rx="0.6" ry="0.7" opacity="0.22" transform="rotate(14 1059 304)"/><ellipse cx="851" cy="221" rx="0.9" ry="1.8" opacity="0.50" transform="rotate(31 851 221)"/><ellipse cx="1155" cy="180" rx="0.5" ry="1.0" opacity="0.22" transform="rotate(30 1155 180)"/><ellipse cx="1224" cy="249" rx="1.5" ry="2.4" opacity="0.32" transform="rotate(4 1224 249)"/><ellipse cx="1036" cy="420" rx="0.9" ry="1.5" opacity="0.45" transform="rotate(-8 1036 420)"/><ellipse cx="828" cy="222" rx="1.2" ry="1.4" opacity="0.38" transform="rotate(100 828 222)"/><ellipse cx="1023" cy="263" rx="0.7" ry="0.9" opacity="0.16" transform="rotate(68 1023 263)"/><ellipse cx="853" cy="200" rx="1.2" ry="2.1" opacity="0.30" transform="rotate(17 853 200)"/><ellipse cx="913" cy="277" rx="0.8" ry="1.9" opacity="0.17" transform="rotate(-3 913 277)"/><ellipse cx="1126" cy="260" rx="1.4" ry="3.1" opacity="0.28" transform="rotate(22 1126 260)"/><ellipse cx="891" cy="302" rx="1.1" ry="2.4" opacity="0.16" transform="rotate(173 891 302)"/><ellipse cx="1218" cy="252" rx="1.4" ry="2.3" opacity="0.28" transform="rotate(72 1218 252)"/><ellipse cx="973" cy="237" rx="0.6" ry="0.9" opacity="0.37" transform="rotate(150 973 237)"/></g><g fill="#2f7a48" filter="url(#bl05)"><ellipse cx="915" cy="161" rx="3" ry="4" opacity="0.6"/><ellipse cx="911" cy="134" rx="2.5" ry="3" opacity="0.55"/><ellipse cx="975" cy="140" rx="2" ry="2.5" opacity="0.5"/><ellipse cx="1100" cy="143" rx="2.5" ry="3" opacity="0.45"/><ellipse cx="1143" cy="306" rx="4" ry="4" opacity="0.6"/><ellipse cx="1000" cy="222" rx="2" ry="3" opacity="0.5"/><ellipse cx="1087" cy="245" rx="2.5" ry="3.5" opacity="0.5"/><ellipse cx="1046" cy="290" rx="3" ry="4" opacity="0.5"/><ellipse cx="985" cy="292" rx="2.5" ry="4" opacity="0.55"/><ellipse cx="1010" cy="329" rx="2" ry="2.5" opacity="0.5"/><ellipse cx="1080" cy="241" rx="2" ry="2.5" opacity="0.5"/><ellipse cx="1097" cy="415" rx="2.5" ry="2.5" opacity="0.5"/><ellipse cx="1070" cy="405" rx="2.5" ry="3" opacity="0.5"/><ellipse cx="1035" cy="275" rx="3" ry="3" opacity="0.45"/><ellipse cx="995" cy="295" rx="2" ry="2.5" opacity="0.5"/><ellipse cx="832" cy="214" rx="2" ry="5" opacity="0.4"/><ellipse cx="961" cy="345" rx="2" ry="2" opacity="0.5"/><ellipse cx="1042" cy="205" rx="2.5" ry="2.5" opacity="0.45"/><ellipse cx="1059" cy="276" rx="3" ry="4" opacity="0.45"/><ellipse cx="1064" cy="270" rx="3" ry="3" opacity="0.4"/></g><g filter="url(#rough)"><path d="M922 226 C906 221 889 235 885 255 C883 269 887 282 899 290" stroke="#2a7c3a" stroke-width="21" fill="none" stroke-linecap="round" opacity=".95"/><path d="M952 294 L968 307" stroke="#2a7c3a" stroke-width="15" stroke-linecap="round" opacity=".95"/><path d="M932 212 C950 206 970 218 976 238 C982 258 976 284 958 296 C944 304 922 298 913 282 C904 264 906 238 916 226 Z" fill="#287a38"/></g><ellipse cx="946" cy="262" rx="24" ry="30" fill="#083a12" filter="url(#bl2)" opacity=".5"/><ellipse cx="948" cy="258" rx="14" ry="16" fill="#052c0c" filter="url(#bl2)" opacity=".55"/><ellipse cx="943" cy="260" rx="9" ry="10" fill="#04300c" filter="url(#bl2)" opacity=".8"/><ellipse cx="942" cy="270" rx="4" ry="4" fill="#3aa848" filter="url(#bl1)" opacity=".8"/><ellipse cx="940" cy="236" rx="7" ry="4" fill="#4ab45a" filter="url(#bl2)" opacity=".5"/><ellipse cx="944" cy="287" rx="9" ry="4" fill="#4ab45a" filter="url(#bl2)" opacity=".4"/><g filter="url(#rough)"><path d="M1110 244 C1116 238 1124 244 1124 252 C1134 262 1138 276 1134 288 C1128 296 1118 290 1114 280 C1106 268 1102 254 1110 244 Z" fill="#2f8842" stroke="#2f8842" stroke-width="3"/></g><ellipse cx="1123" cy="273" rx="9" ry="15" fill="#063a10" filter="url(#bl2)" opacity=".8" transform="rotate(-24 1123 273)"/><ellipse cx="1126" cy="279" rx="3.500" ry="6" fill="#2f9a3c" filter="url(#bl2)" opacity=".8" transform="rotate(-24 1126 279)"/><g filter="url(#rough)" opacity=".6"><path d="M1061 270 C1066 264 1070 272 1075 268 C1080 264 1084 272 1092 266 L1086 278 C1082 284 1078 276 1074 280 C1068 286 1064 278 1061 270 Z" fill="#58b070" stroke="#58b070" stroke-width="4"/></g><g filter="url(#bl1)"><path d="M998 433.500 L1010.300 424" stroke="#103f17" stroke-width="9.500" stroke-linecap="round"/><circle cx="998" cy="433.500" r="6.800" fill="#103f17"/><circle cx="1010.300" cy="424" r="6.800" fill="#103f17"/><circle cx="998" cy="434" r="2.500" fill="#1a6224"/><circle cx="1009.500" cy="425" r="2.500" fill="#1a6224"/></g><g fill="#2f7a48" filter="url(#bl05)"><ellipse cx="1033" cy="289" rx="3" ry="5" opacity="0.5" transform="rotate(30 1033 289)"/><ellipse cx="985" cy="291" rx="2.5" ry="4.5" opacity="0.5" transform="rotate(-20 985 291)"/><ellipse cx="1021" cy="303" rx="2.5" ry="3" opacity="0.5" transform="rotate(0 1021 303)"/><ellipse cx="995" cy="301" rx="2.5" ry="3" opacity="0.45" transform="rotate(0 995 301)"/><ellipse cx="1052" cy="291" rx="2" ry="4" opacity="0.4" transform="rotate(15 1052 291)"/><ellipse cx="1025" cy="240" rx="2.5" ry="4" opacity="0.4" transform="rotate(20 1025 240)"/><ellipse cx="1008" cy="255" rx="2" ry="3.5" opacity="0.4" transform="rotate(0 1008 255)"/><ellipse cx="1002" cy="237" rx="2" ry="3" opacity="0.4" transform="rotate(10 1002 237)"/><ellipse cx="1058" cy="248" rx="2" ry="3" opacity="0.4" transform="rotate(0 1058 248)"/><ellipse cx="1085" cy="245" rx="2.5" ry="4" opacity="0.45" transform="rotate(-15 1085 245)"/><ellipse cx="1107" cy="228" rx="2" ry="2.5" opacity="0.4" transform="rotate(0 1107 228)"/><ellipse cx="1043" cy="218" rx="2" ry="3" opacity="0.4" transform="rotate(20 1043 218)"/><ellipse cx="1106" cy="290" rx="2" ry="3" opacity="0.4" transform="rotate(0 1106 290)"/><ellipse cx="912" cy="300" rx="3" ry="5" opacity="0.35" transform="rotate(40 912 300)"/><ellipse cx="925" cy="306" rx="3" ry="5" opacity="0.35" transform="rotate(-30 925 306)"/><ellipse cx="1013" cy="298" rx="2" ry="3" opacity="0.4" transform="rotate(0 1013 298)"/><ellipse cx="1073" cy="298" rx="2" ry="3" opacity="0.35" transform="rotate(0 1073 298)"/></g><g stroke="#f028f4" stroke-width="1.050" fill="none"><rect x="798.600" y="125.800" width="429.600" height="323.400"/><rect x="826.800" y="147.600" width="372.600" height="279.600"/><path d="M798.600 125.800 L826.800 147.600 M1228.200 125.800 L1199.400 147.600 M798.600 449.200 L826.800 427.200 M1228.200 449.200 L1199.400 427.200"/></g><g font-family="Liberation Sans,sans-serif" font-size="31" fill="#fff" text-anchor="middle"><text x="1015.500" y="117.500">N</text><text x="1014.500" y="478">S</text><text x="785" y="298">E</text><text x="1249" y="298">W</text><text x="1014" y="297" font-size="28.500" opacity=".93">Z</text></g></svg>
<div class="abs" style="left:997px;top:516px;width:32px;height:2.500px;background:#cdcdcd"></div>
<div class="abs" style="left:526px;top:519px;width:325px;height:12.500px;background:linear-gradient(#e4412c,#f04c34 40%,#f65238)"></div>
<svg class="abs" style="left:526px;top:519px" width="46" height="13" viewBox="0 0 46 13"><path d="M3.800 6.200 H6.300" stroke="rgba(40,30,30,.8)" stroke-width=".9"/><path d="M6.100 4.800 L7.200 5.400 H9.600 V7 H7.200 L6.100 7.600 Z" fill="rgba(45,35,35,.85)"/><rect x="13.500" y="0" width="13.500" height="12.500" fill="#fb8a74"/><g stroke="rgba(70,15,8,.85)" stroke-width=".8" fill="rgba(110,20,10,.6)"><rect x="32" y="3.800" width="5" height="5"/><path d="M34.500 1.500 V11 M30 6.300 H39" fill="none"/></g></svg>
<span class="lbl" style="left:542.5px;top:518px;color:#1a1010;letter-spacing:0">R</span>
<div class="abs" style="left:573px;top:523.800px;width:186.5px;height:4px;border:1px solid #a9a9a9;border-radius:2px;background:#e9e9e9"></div>
<div class="abs" style="left:573px;top:523.800px;width:91px;height:4px;border:1px solid #5a83ad;border-radius:2px;background:#6fa6d9"></div>
<div class="abs" style="left:662px;top:520.300px;width:7.500px;height:10.700px;border:1px solid #9a9a9a;border-radius:2.500px;background:linear-gradient(#fdfdfd,#e4e4e4)"></div>
<span class="lbl" style="left:764.3px;top:518px;color:#151010">5169.632 km/s</span>
<div class="abs" style="left:851px;top:519px;width:325px;height:12.500px;background:linear-gradient(#e6cf44,#efd84c 40%,#f2dc52)"></div>
<svg class="abs" style="left:851px;top:519px" width="46" height="13" viewBox="0 0 46 13"><path d="M3.800 6.200 H6.300" stroke="rgba(40,30,30,.8)" stroke-width=".9"/><path d="M6.100 4.800 L7.200 5.400 H9.600 V7 H7.200 L6.100 7.600 Z" fill="rgba(45,35,35,.85)"/><rect x="13.500" y="0" width="13.500" height="12.500" fill="#fbee96"/><g stroke="rgba(60,50,5,.85)" stroke-width=".8" fill="rgba(90,75,10,.6)"><rect x="32" y="3.800" width="5" height="5"/><path d="M34.500 1.500 V11 M30 6.300 H39" fill="none"/></g></svg>
<span class="lbl" style="left:867.5px;top:518px;color:#1a1010;letter-spacing:0">Y</span>
<div class="abs" style="left:898px;top:523.800px;width:186.5px;height:4px;border:1px solid #a9a9a9;border-radius:2px;background:#e9e9e9"></div>
<div class="abs" style="left:898px;top:523.800px;width:91px;height:4px;border:1px solid #5a83ad;border-radius:2px;background:#6fa6d9"></div>
<div class="abs" style="left:987px;top:520.300px;width:7.500px;height:10.700px;border:1px solid #9a9a9a;border-radius:2.500px;background:linear-gradient(#fdfdfd,#e4e4e4)"></div>
<span class="lbl" style="left:1086.3px;top:518px;color:#151010">44° 34' 51.847"</span>
<div class="abs" style="left:1176px;top:519px;width:325px;height:12.500px;background:linear-gradient(#68b444,#70c04a 40%,#74c44e)"></div>
<svg class="abs" style="left:1176px;top:519px" width="46" height="13" viewBox="0 0 46 13"><path d="M3.800 6.200 H6.300" stroke="rgba(40,30,30,.8)" stroke-width=".9"/><path d="M6.100 4.800 L7.200 5.400 H9.600 V7 H7.200 L6.100 7.600 Z" fill="rgba(45,35,35,.85)"/><rect x="13.500" y="0" width="13.500" height="12.500" fill="#98e472"/><g stroke="rgba(20,55,10,.85)" stroke-width=".8" fill="rgba(30,80,15,.6)"><rect x="32" y="3.800" width="5" height="5"/><path d="M34.500 1.500 V11 M30 6.300 H39" fill="none"/></g></svg>
<span class="lbl" style="left:1192.5px;top:518px;color:#1a1010;letter-spacing:0">G</span>
<div class="abs" style="left:1223px;top:523.800px;width:186.5px;height:4px;border:1px solid #a9a9a9;border-radius:2px;background:#e9e9e9"></div>
<div class="abs" style="left:1223px;top:523.800px;width:91px;height:4px;border:1px solid #5a83ad;border-radius:2px;background:#6fa6d9"></div>
<div class="abs" style="left:1312px;top:520.300px;width:7.500px;height:10.700px;border:1px solid #9a9a9a;border-radius:2.500px;background:linear-gradient(#fdfdfd,#e4e4e4)"></div>
<span class="lbl" style="left:1411.3px;top:518px;color:#151010">4h 51m 30.664s</span>
<div class="abs" style="left:526px;top:531.500px;width:974px;height:294.500px;background:#000"></div>
<svg class="abs" style="left:526px;top:531px" width="974" height="296" viewBox="526 531 974 296">
<defs>
<filter id="nz" x="0" y="0" width="100%" height="100%" color-interpolation-filters="sRGB"><feTurbulence type="fractalNoise" baseFrequency=".17 .14" numOctaves="2" seed="11"/><feColorMatrix type="matrix" values=".29 .29 0 0 -.118  .29 .29 0 0 -.118  .29 .29 0 0 -.118  0 0 0 0 1"/><feGaussianBlur stdDeviation=".8 .9"/></filter>
<filter id="nz2" x="0" y="0" width="100%" height="100%" color-interpolation-filters="sRGB"><feTurbulence type="fractalNoise" baseFrequency=".17 .15" numOctaves="2" seed="23"/><feColorMatrix type="matrix" values=".29 .29 0 0 -.118  .29 .29 0 0 -.118  .29 .29 0 0 -.118  0 0 0 0 1"/><feGaussianBlur stdDeviation=".8 .9"/></filter>
<filter id="nz3" x="0" y="0" width="100%" height="100%" color-interpolation-filters="sRGB"><feTurbulence type="fractalNoise" baseFrequency=".13 .08" numOctaves="2" seed="5"/><feColorMatrix type="matrix" values=".29 .29 0 0 -.118  .29 .29 0 0 -.118  .29 .29 0 0 -.118  0 0 0 0 1"/><feGaussianBlur stdDeviation=".9 1.2"/></filter>
<radialGradient id="glow"><stop offset="0" stop-color="#d8d8d8" stop-opacity=".95"/><stop offset=".3" stop-color="#d4d4d4" stop-opacity=".82"/><stop offset=".55" stop-color="#cccccc" stop-opacity=".45"/><stop offset=".8" stop-color="#c4c4c4" stop-opacity=".13"/><stop offset="1" stop-color="#c4c4c4" stop-opacity="0"/></radialGradient><filter id="gb3" x="-100%" y="-100%" width="300%" height="300%"><feGaussianBlur stdDeviation="2.600"/></filter><filter id="gb2" x="-100%" y="-100%" width="300%" height="300%"><feGaussianBlur stdDeviation="1.800"/></filter>
</defs>
<rect x="526" y="557" width="324.500" height="243" fill="#242424"/><rect x="526" y="557" width="324.500" height="243" fill="#686868" filter="url(#nz)"/>
<rect x="851.500" y="629" width="324" height="99" fill="#242424"/><rect x="851.500" y="629" width="324" height="99" fill="#686868" filter="url(#nz2)"/>
<rect x="1263" y="531.500" width="152" height="294.500" fill="#262626"/><rect x="1263" y="531.500" width="152" height="294.500" fill="#5c5c5c" filter="url(#nz3)"/>
<g fill="url(#glow)">
<ellipse cx="579" cy="648.500" rx="9.500" ry="12.500" opacity=".85"/>
<ellipse cx="589" cy="648" rx="11" ry="7" opacity=".3"/>
<ellipse cx="604" cy="652.500" rx="15" ry="9.500" opacity=".45"/>
<ellipse cx="623" cy="659" rx="11" ry="9" opacity=".5"/>
<ellipse cx="642.500" cy="655" rx="12.500" ry="9" opacity=".92" transform="rotate(20 642.500 655)"/>
<ellipse cx="651" cy="661" rx="11" ry="7" opacity=".5" transform="rotate(40 651 661)"/>
<ellipse cx="777.500" cy="665" rx="10.500" ry="12.500" opacity=".9"/>
<ellipse cx="779" cy="673" rx="8" ry="9.500" opacity=".4"/>
<ellipse cx="683" cy="792" rx="6.500" ry="6.500" opacity=".75"/>
<ellipse cx="957" cy="653.500" rx="17" ry="10.500" opacity=".92" transform="rotate(28 957 653.500)"/>
<ellipse cx="964" cy="658" rx="11" ry="8" opacity=".45"/>
<ellipse cx="915.500" cy="665" rx="11" ry="7" opacity=".42" transform="rotate(-30 915.500 665)"/>
<ellipse cx="1105" cy="672" rx="6.500" ry="11" opacity=".5" transform="rotate(25 1105 672)"/>
</g>
<ellipse cx="1380" cy="746" rx="4" ry="4" fill="#000" filter="url(#gb2)" opacity=".7"/>
<rect x="850.500" y="531" width="1" height="295" fill="#5a5a78"/><rect x="1175.500" y="531" width="1" height="295" fill="#5a5a78"/>
</svg>
<!--RIGHT-END-->
</div>
</body>
</html>
